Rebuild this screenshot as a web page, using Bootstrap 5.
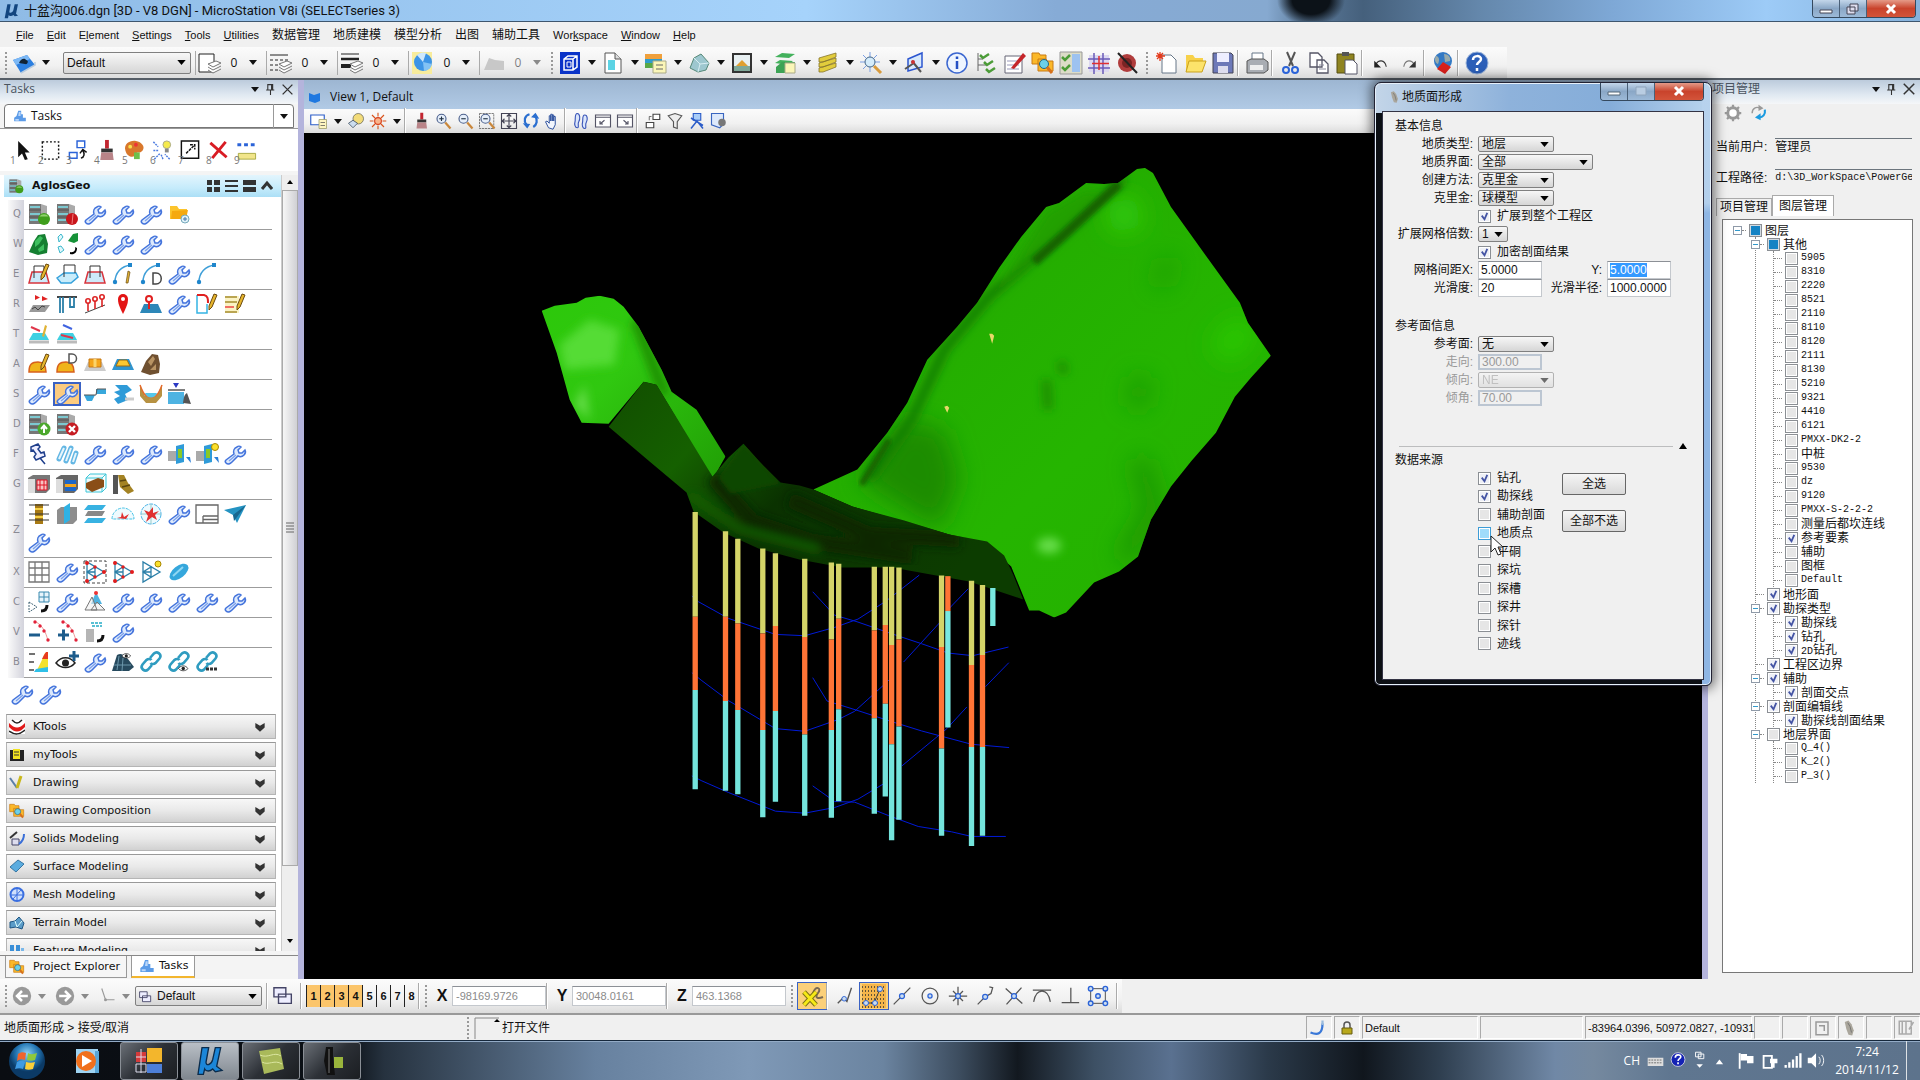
<!DOCTYPE html>
<html lang="zh-CN">
<head>
<meta charset="utf-8">
<meta name="viewport" content="width=device-width, initial-scale=1">
<title>十盆沟006.dgn - MicroStation V8i</title>
<link rel="stylesheet" href="https://cdn.jsdelivr.net/npm/bootstrap@5.3.0/dist/css/bootstrap.min.css">
<style>
:root{--ui:"Open Sans","Noto Sans CJK SC",sans-serif;--face:#f0f0f0}
body{font:12px/16px var(--ui);color:#111;background:var(--face);height:100vh;overflow:hidden}
svg{flex:none;display:block}
button{font:inherit;color:inherit;border:0;background:none;padding:0}
a{color:inherit;text-decoration:none}
::selection{background:#3399ff;color:#fff}
.zh{font-family:"Liberation Sans","Noto Sans CJK SC",sans-serif;font-size:12px}
.ico{width:24px;height:24px}
.ico-s{width:18px;height:18px}
/* window frame */
.titlebar{height:22px;font-family:Roboto,"Noto Sans CJK SC",sans-serif;font-size:13px;border-bottom:1px solid #3e566e;background:radial-gradient(ellipse 34px 26px at 1311px 0,#0c1218 55%,#0c121800),linear-gradient(90deg,#8fbbe6,#a6d3fb 42%,#86abd6 55%,#86a9d0 66%,#5d7b9b 68%,#45607c 71%,#6487ab 77%,#7ea8d6 84%,#9dcbf7 92%,#86b2dc)}
.winbtns{height:18px;border:1px solid #35495e;border-top:0;border-radius:0 0 4px 4px;overflow:hidden}
.winbtns button{width:27px;background:linear-gradient(#c3d6ea,#8aa7c6 50%,#9dbad8);border-right:1px solid #4a6078;color:#fff}
.winbtns button.shut{width:48px;border:0;background:linear-gradient(#e59a88,#c9432c 50%,#d3543a)}
.menus{height:25px;font-family:"Liberation Sans","Noto Sans CJK SC",sans-serif;font-size:11px;gap:13px;padding-left:16px}
.strip{background:linear-gradient(#fbfbfb,#f1f1f1 60%,#dcdcdc)}
.strip-main{height:31px}
.toolhost{border-bottom:2px solid #555d66;height:33px}
.grip{width:8px;height:24px;background:radial-gradient(circle,#999 1px,transparent 1px) 0 0/4px 4px repeat-y}
.vsep{width:6px;height:26px;border-left:1px solid #aaa;background:linear-gradient(90deg,#fff 1px,transparent 1px)}
.drop{width:19px;height:24px;display:flex;align-items:center;justify-content:center}
.drop::after{content:"";border:4px solid transparent;border-top:5px solid #111;border-bottom:0}
.drop.dim::after{border-top-color:#8a8a8a}
.cell28{width:28px;display:flex;justify-content:center}
.attr{width:71px;padding-left:2px;border-left:1px solid #aaa;display:flex;align-items:center}
.attr span{width:24px;text-align:center}
.attr .drop{width:14px}
.form-select.pick{font:12px/14px "Liberation Sans","Noto Sans CJK SC",sans-serif;color:#111;padding:0 16px 0 3px;border:1px solid #808080;border-radius:2px;background:url("data:image/svg+xml,%3Csvg xmlns='http://www.w3.org/2000/svg' viewBox='0 0 10 6'%3E%3Cpath d='M0 0h10L5 6z'/%3E%3C/svg%3E") right 4px center/9px 5px no-repeat,linear-gradient(#f7f7f7,#d6d6d6);height:16px;width:76px;min-height:0}
.form-select.pick:disabled{color:#999;background-color:#eee;opacity:.55}
.form-select.withicon{padding-left:21px}
.form-control.fld{font:12px/14px "Liberation Sans",sans-serif;height:18px;width:64px;min-height:0;padding:0 2px;border:1px solid #c4c8cd;border-top-color:#8c9096;border-radius:0;color:#111;background:#fff;box-shadow:none}
.form-control.fld:disabled{color:#999;background:#f0f0f0;border:2px solid #bcc6d2;height:16px}
.form-check-input.tick{width:13px;height:13px;margin:0;flex:none;border:1px solid #8b8f94;border-radius:0;background-color:#e6e6e6;box-shadow:inset 0 0 0 1px #fff}
.form-check-input.tick:checked{background-color:#eef0f6;border-color:#8b8f94;--bs-form-check-bg-image:url("data:image/svg+xml,%3Csvg xmlns='http://www.w3.org/2000/svg' viewBox='0 0 12 12'%3E%3Cpath d='M3 5l3 4L9 2' fill='none' stroke='%234454a4' stroke-width='2'/%3E%3C/svg%3E")}
.form-check-input.tick:indeterminate{background:#1583c4;border:2px solid #d3dbe2;outline:1px solid #8b8f94;outline-offset:-1px;box-shadow:none}
.form-check-input.hot{background-color:#9fdcfb;border-color:#3c9cd6}
/* docks */
.dock-l{width:304px;border-right:6px solid #b4b4dc;background:#f4f4f4}
.dock-r{width:218px;border-left:6px solid #b4b4dc}
.dockhead{height:24px;color:#4a5460;font-size:12px;background:linear-gradient(#bccbdc,#dfe8f1 60%,#f5f7f9);padding:0 4px 6px 0}
.combo{height:24px;margin:0 4px;border:1px solid #777;border-radius:4px 4px 0 0;background:#fff}
.combo .drop{border-left:1px solid #999;width:20px}
.quick{height:43px;border-top:1px solid #999;background:#fff;padding:10px 0 0 8px;font-size:10px;line-height:10px;color:#777}
.quick div{position:relative;width:28px;height:26px}
.quick svg{width:28px;height:23px}
.quick i{position:absolute;left:2px;bottom:0;font-style:normal}
.palhead{height:22px;font:bold 11px/22px "DejaVu Sans",sans-serif;background:linear-gradient(#e3f5fd,#c5ebfb 60%,#abdff6);margin:0 0 3px 4px;padding:0 8px 0 4px}
.prow{display:flex;min-height:30px}
.pkey{width:16px;margin-left:8px;background:linear-gradient(90deg,#fafafa,#d3d3dc);color:#8a8a94;font:10px/28px "DejaVu Sans",sans-serif;padding-left:5px}
.pset{width:248px;border-bottom:1px solid #9c9c9c;padding:2px 0 3px 1px;display:flex;flex-wrap:wrap;row-gap:4px}
.pset svg,.ploose svg{width:28px;height:24px}
.pset .on{background:#fccb7f;outline:2px solid #3a62c4;outline-offset:-2px}
.pbtn{height:25px;margin:0 2px 3px 6px;padding:0 8px 0 2px;width:270px;border:1px solid #b5b5b5;border-top-color:#999;background:linear-gradient(#f7f7f7,#e9e9e9 50%,#d1d1d1);font:11px/22px "DejaVu Sans",sans-serif}
.vscroll{width:17px;background:#eee;border-left:1px solid #ccc}
.vscroll .thumb{height:676px;background:linear-gradient(90deg,#f6f6f6,#d0d0d4);border:1px solid #aaa}
.docktabs{height:24px;border-top:1px solid #888;font:11px/24px "DejaVu Sans",sans-serif;padding-left:5px}
.docktabs a{height:22px;border:1px solid #999;border-top:0;background:#f6f6f6;padding:0 6px 0 3px}
.docktabs a.cur{background:#fff;border-bottom:2px solid #f3b62e}
/* view window */
.viewhead{height:29px;background:linear-gradient(#9db6d2,#b1cae5);font-size:12px;padding-top:4px}
.viewbar{height:24px;padding-left:4px}
.viewbar .ico-s{width:22px}
.viewbar .drop{width:15px}
/* project panel */
.pathrow{margin-top:14px;margin-bottom:9px}
.tabs2 a{border:1px solid #aaa;border-bottom:0;padding:0 3px;height:18px;line-height:17px}
.tabs2 a.cur{background:#fff;height:21px;padding:0 6px;line-height:20px}
.treebox{margin:3px 7px 6px 14px;border:1px solid #777;background:#fff;padding:3px 0 0 10px;font:12px/14px "Noto Sans CJK SC",sans-serif;overflow:hidden}
.treebox ul{list-style:none;margin:0;padding:0}
.treebox ul ul{margin-left:22px;border-left:1px dotted #888}
.treebox ul ul>li{margin-left:-5px}
.treebox .trow{display:flex;align-items:center;height:14px;white-space:nowrap}
.treebox label{display:flex;align-items:center;gap:3px}
.twig{width:16px;height:9px;display:flex;align-items:center}
.twig::after{content:"";flex:1;margin:0 3px 0 0;border-top:1px dotted #888}
.leaf{padding-left:5px}
.tog{width:9px;height:9px;border:1px solid #8f9aa8;background:linear-gradient(#39c,#39c) center/5px 1px no-repeat #fff}
.mono{font-family:"Liberation Mono",monospace;font-size:10px}
/* dialog */
.dlg{position:absolute;top:82px;right:208px;width:338px;padding:0 7px 5px;border:1px solid #223;border-radius:7px 7px 6px 6px;background:linear-gradient(180deg,#b8d3ee,#b3cfec 120px,#8fb6e4 130px) right/9px 100% no-repeat,linear-gradient(90deg,#c3d5e8,#8eb2db 40%,#85add9 70%,#b9d4ee) top/100% 30px no-repeat,#0c0f14;box-shadow:inset 0 0 0 1px #e6f0fa,0 0 12px 3px #0008}
.dlg .cap{height:28px;padding-left:6px}
.dlg .pane{background:var(--face);border:1px solid #334;height:569px;padding:5px 14px 0 12px}
.dlg .frow{display:flex;align-items:center;height:18px;line-height:16px}
.dlg .frow>.nm{width:78px;text-align:right;margin-right:5px;white-space:nowrap}
.dlg .off{color:#999}
.dlg .sect{margin-top:20px}
.dlg .rule{height:10px;margin-top:34px}
.srcs{height:184px;margin-left:83px;width:80px}
.srcs label,.frow label.ck{display:flex;align-items:center;gap:6px;height:18px}
.flat-btn{width:64px;height:22px;border:1px solid #666;border-radius:2px;background:linear-gradient(#f5f5f5,#d9d9d9);margin-bottom:15px}
/* bottom */
.strip-low{height:34px}
.nums button{width:14px;height:22px;border-left:1px solid #222;font:bold 11px/22px "Liberation Sans",sans-serif}
.nums .lit{background:#fbc56b}
.axis{font:bold 16px/20px "Liberation Sans",sans-serif;width:20px;text-align:center}
.form-control.coord{width:94px;height:20px;font-size:11px;color:#8a8a8a;padding:0 3px}
.snapon{outline:1px solid #3a62c4;background:#fbd07a}
.status{height:27px;border-top:2px solid #999}
.sbox{height:23px;border:1px solid #aaa;border-right-color:#fff;border-bottom-color:#fff;margin-right:2px;width:26px;padding:0 2px;display:flex;align-items:center;font-size:11px}
.taskbar{height:40px;border-top:1px solid #16283c;box-shadow:inset 0 1px #93abc6;color:#fff;background:linear-gradient(90deg,#0a0d12 0,#0b1016 18%,#26323f 20%,#67819f 31%,#7f99b7 39%,#6b84a0 46%,#3c4c5e 50%,#12181f 53%,#3d5064 57%,#5a7190 61%,#2b3a4a 66%,#10161d 71%,#2f3f50 75%,#7088a6 81%,#75899f 83%,#5f7690 87%,#5d738c)}
.tkb{width:58px;height:38px;margin-right:3px;border:1px solid #8a8f96;border-radius:3px;background:linear-gradient(135deg,#6a6f76,#2c3036 50%,#1b1e22)}
.tkb.cur{background:linear-gradient(#b9bfc6,#80878f)}
.tray svg{width:23px;height:19px}
.clock{width:78px;text-align:center;line-height:18px}
.showdesk{width:14px}
</style>
<script src="https://cdn.jsdelivr.net/npm/bootstrap@5.3.0/dist/js/bootstrap.bundle.min.js"></script>
</head>
<body class="d-flex flex-column">
<svg width="0" height="0" class="position-absolute" aria-hidden="true">
<defs>
<linearGradient id="gGreen" x1="0" y1="0" x2="1" y2="1"><stop offset="0" stop-color="#1f9a04"/><stop offset=".35" stop-color="#24ae00"/><stop offset=".6" stop-color="#25b500"/><stop offset="1" stop-color="#24b000"/></linearGradient>
<linearGradient id="gLobe" x1="0" y1="0" x2="1" y2="1"><stop offset="0" stop-color="#2cc80a"/><stop offset=".4" stop-color="#30c810"/><stop offset="1" stop-color="#1f9a04"/></linearGradient>
<linearGradient id="gDark" x1="0" y1="0" x2="1" y2=".5"><stop offset="0" stop-color="#114a00"/><stop offset=".3" stop-color="#156000"/><stop offset=".55" stop-color="#0a3200"/><stop offset="1" stop-color="#0c3c00"/></linearGradient>
<radialGradient id="gOrb" cx=".5" cy=".3"><stop offset="0" stop-color="#8fd3f5"/><stop offset=".6" stop-color="#2477b4"/><stop offset="1" stop-color="#0b3a66"/></radialGradient>
<filter id="bx" x="-50%" y="-50%" width="200%" height="200%"><feGaussianBlur stdDeviation="12"/></filter>
<filter id="bl"><feGaussianBlur stdDeviation="5"/></filter>
<filter id="bs"><feGaussianBlur stdDeviation="2"/></filter>
</defs>
<symbol id="wr" viewBox="0 0 24 24"><path d="M3 21c-1-1-1-2 0-3l8-6c-1-3 0-6 3-7 1-1 3-1 4 0l-3 3 1 3 3 0 3-3c1 2 0 4-1 5-2 2-4 2-6 1l-6 6c-2 2-4 3-6 1z" fill="#dce9fc" stroke="#4474dc" stroke-width="1.500"/><path d="M6 19l7-6" stroke="#7ba0ea" stroke-width="1.200"/></symbol>
<symbol id="db" viewBox="0 0 24 24"><path d="M2 2h12v20H2z" fill="#777"/><path d="M14 2l6 2v18h-6z" fill="#aaa"/><path d="M3 5h10M3 12h10M3 18h8" stroke="#7fe3ee" stroke-width="1.500"/><path d="M2 8h12M2 15h12" stroke="#555"/></symbol>
<symbol id="dbg" viewBox="0 0 24 24"><use href="#db"/><circle cx="17" cy="17" r="6" fill="#3f9e1c"/><path d="M12.500 14.500a5 4 0 0 1 9 0" fill="#8fd06c"/></symbol>
<symbol id="dbr" viewBox="0 0 24 24"><use href="#db"/><circle cx="17" cy="17" r="6" fill="#c9151b"/><path d="M18 12l-1 10" stroke="#ef7b7b"/></symbol>
<symbol id="dbu" viewBox="0 0 24 24"><use href="#db"/><circle cx="17" cy="17" r="6.500" fill="#4ba82c"/><path d="M17 21v-7m-3 3l3-3.500 3 3.500" stroke="#fff" stroke-width="2" fill="none"/></symbol>
<symbol id="dbx" viewBox="0 0 24 24"><use href="#db"/><circle cx="17" cy="17" r="6.500" fill="#c61c22"/><path d="M14 14l6 6m0-6l-6 6" stroke="#fff" stroke-width="2.400"/></symbol>
<symbol id="fold" viewBox="0 0 24 24"><path d="M3 4h7l2 3h8v10H3z" fill="#fcc42c"/><path d="M5 9l16-1-2 9H4z" fill="#f5a90f"/><circle cx="18" cy="17" r="4" fill="#dff1f8" stroke="#7ab"/><path d="M18 15v4m-2-2h4" stroke="#47a"/></symbol>
<symbol id="rockg" viewBox="0 0 24 24"><path d="M2 20L7 9l4-6 7-1 3 10-1 9-9 2z" fill="#157f31"/><path d="M8 9l5-5 3 2-4 6-4 3zM11 17l6-5v6l-5 2z" fill="#3ec05f"/></symbol>
<symbol id="rocks" viewBox="0 0 24 24"><path d="M3 5l3-3 2 3-4 5zM3 15l3-1 3 4-4 3z" fill="#dff7fb" stroke="#3cb8cc"/><path d="M13 9l5-7 5-1v8l-4 2z" fill="#169238"/><path d="M15 20c4 1 6-2 5-5l2 1c0 5-3 7-7 6z"/></symbol>
<symbol id="rockb" viewBox="0 0 24 24"><path d="M2 20L7 9l6-7 6 1 2 9-1 9-9 2z" fill="#6f5030"/><path d="M9 10l5-6 2 3-4 7zM11 18l6-6v6z" fill="#b99463"/></symbol>
<symbol id="pen" viewBox="0 0 24 24"><path d="M14 14L19 2l3 1-5 12-3 3z" fill="#e6b52c" stroke="#6b4a10"/></symbol>
<symbol id="trp" viewBox="0 0 24 24"><path d="M5 10h14l3 11H2z" fill="#cdeafa" stroke="#d8343c" stroke-width="1.500"/><path d="M7 16V4h10v11" stroke="#333" fill="none"/></symbol>
<symbol id="trpp" viewBox="0 0 24 24"><use href="#trp"/><use href="#pen"/></symbol>
<symbol id="trb" viewBox="0 0 24 24"><path d="M2 16l7-5h12l2 4-7 6H6z" fill="#c9ecfa" stroke="#35a1dc" stroke-width="1.500"/><path d="M9 15V3h11v8" stroke="#333" fill="none"/></symbol>
<symbol id="cv" viewBox="0 0 24 24"><path d="M4 20C4 11 10 4 20 3" stroke="#3f9fd8" stroke-width="1.500" fill="none"/><circle cx="4" cy="20" r="2.200" fill="#1f86cc"/><path d="M17 1h4v4h-4z" fill="#1f86cc"/></symbol>
<symbol id="cvp" viewBox="0 0 24 24"><use href="#cv"/><path d="M15 21l2-12 2 1-2 11z" fill="#e0b234" stroke="#6b4a10" stroke-width=".7"/></symbol>
<symbol id="dee" viewBox="0 0 24 24"><path d="M14 11h3c7 0 7 11 0 11h-3z" fill="none" stroke="#444" stroke-width="1.500"/></symbol>
<symbol id="cvd" viewBox="0 0 24 24"><use href="#cv"/><use href="#dee"/></symbol>
<symbol id="flag" viewBox="0 0 24 24"><path d="M2 20l4-7h17l-5 7z" fill="#999"/><path d="M5 17l3-2 3 3 4-4 3 1" stroke="#444" fill="none"/><path d="M8 12V3l5 2.500L8 8M15 12V4l6 3-6 2" fill="#e02222"/></symbol>
<symbol id="pipes" viewBox="0 0 24 24"><path d="M2 5h20" stroke="#444" stroke-width="2"/><path d="M5 5v16m3-16v16M15 5v10h4V5" stroke="#2b7fa8" stroke-width="1.800" fill="none"/></symbol>
<symbol id="pin" viewBox="0 0 24 24"><path d="M12 22C8 14 7 11 7 7a5 5 0 0 1 10 0c0 4-1 7-5 15z" fill="#e31414"/><circle cx="12" cy="7" r="2" fill="#fff"/></symbol>
<symbol id="pins" viewBox="0 0 24 24"><path d="M2 21l20-8" stroke="#444"/><g fill="none" stroke="#d22" stroke-width="1.600"><circle cx="5" cy="9" r="2.200"/><path d="M5 11v8"/><circle cx="12" cy="7" r="2.200"/><path d="M12 9v8"/><circle cx="19" cy="5" r="2.200"/><path d="M19 7v8"/></g></symbol>
<symbol id="pinb" viewBox="0 0 24 24"><path d="M5 12h14l4 9H1z" fill="#2d87b8"/><circle cx="10" cy="7" r="3" fill="#fff" stroke="#e02020" stroke-width="2"/><path d="M10 10v7" stroke="#e02020" stroke-width="2"/></symbol>
<symbol id="docr" viewBox="0 0 24 24"><path d="M2 3v18h10V12" fill="none" stroke="#35b4e4" stroke-width="1.500"/><path d="M2 3h7c4 1 4 4 4 8" fill="none" stroke="#e02020" stroke-width="2"/><use href="#pen"/></symbol>
<symbol id="docl" viewBox="0 0 24 24"><path d="M2 4h14v17H2z" fill="#fbf3c4"/><path d="M2 5h12M2 10h12M2 20h12" stroke="#a58c2c" stroke-width="1.500"/><path d="M2 15h9" stroke="#e44" stroke-width="1.500"/><use href="#pen"/></symbol>
<symbol id="tea" viewBox="0 0 24 24"><path d="M6 11h12l4 7H2z" fill="#3fd0e2"/><path d="M2 20h20" stroke="#bbb" stroke-width="3"/><path d="M4 5l9 4" stroke="#e0364a" stroke-width="2"/><path d="M15 14l3-11 2 1-3 11z" fill="#e0b234"/></symbol>
<symbol id="teb" viewBox="0 0 24 24"><path d="M6 11h12l4 7H2z" fill="#3fd0e2"/><path d="M2 20h20" stroke="#bbb" stroke-width="3"/><path d="M8 3l9 4" stroke="#3f63e0" stroke-width="2"/><path d="M6 13l12 3" stroke="#e0364a" stroke-width="2"/></symbol>
<symbol id="mnd" viewBox="0 0 24 24"><path d="M2 20c0-8 3-10 9-10 5 0 8 3 8 10z" fill="#f0b41a" stroke="#d7601c" stroke-width="1.500"/></symbol>
<symbol id="mndp" viewBox="0 0 24 24"><use href="#mnd"/><use href="#pen"/></symbol>
<symbol id="mndd" viewBox="0 0 24 24"><use href="#mnd"/><path d="M14 2h3c6 0 6 9 0 9h-3z" fill="#fff" stroke="#555" stroke-width="1.500"/></symbol>
<symbol id="bxo" viewBox="0 0 24 24"><path d="M5 10h14l4 9H1z" fill="#ccc"/><path d="M6 7h12v8H6z" fill="#f5a51b" stroke="#c57612"/><path d="M12 7v8" stroke="#fbd46b" stroke-width="3"/></symbol>
<symbol id="bxb" viewBox="0 0 24 24"><path d="M6 7h12l5 11H1z" fill="#2f94cf"/><path d="M8 8h8l3 6H5z" fill="#fcc731" stroke="#9c6b10"/></symbol>
<symbol id="chan" viewBox="0 0 24 24"><path d="M1 13h11l-3 6H4zM13 7h10v5H13z" fill="#38a8dc"/><path d="M1 13h12l1-6h9" stroke="#555" fill="none"/></symbol>
<symbol id="riv" viewBox="0 0 24 24"><path d="M4 3h12l5 5-7 4 3 6-10 4-4-5 6-3-6-4 6-2z" fill="#2f9bd8"/><path d="M14 17h9" stroke="#ccc" stroke-width="3"/></symbol>
<symbol id="vly" viewBox="0 0 24 24"><path d="M1 3l5 11 12-1 5-10v11l-6 7H7l-6-7z" fill="#b79242"/><path d="M1 3c3 8 5 12 11 12s8-4 11-12" stroke="#e46b2c" stroke-width="1.500" fill="none"/><path d="M6 11h12c-2 6-10 6-12 0z" fill="#55c7ea"/></symbol>
<symbol id="wat" viewBox="0 0 24 24"><path d="M1 10h16v12H1z" fill="#4eb3e2"/><path d="M1 8h17" stroke="#555" stroke-width="1.500"/><path d="M6 1h6l-3 5z" fill="#2b39c4"/><path d="M16 21c1-6 1-8 4-10l4 11z" fill="#555"/></symbol>
<symbol id="push" viewBox="0 0 24 24"><path d="M4 5l7-3 2 3-2 2 3 4 3-1 1 4-9 4-2-3 2-3-3-4-2 1zM13 16l5 6" fill="#eef" stroke="#1f3f8c" stroke-width="1.500"/></symbol>
<symbol id="blob" viewBox="0 0 24 24"><path d="M4 17L9 6M11 19l5-13M18 20l3-9" stroke="#64b7e4" stroke-width="5" stroke-linecap="round"/><path d="M4 17L9 6M11 19l5-13M18 20l3-9" stroke="#e6f5fc" stroke-width="2"/></symbol>
<symbol id="slab" viewBox="0 0 24 24"><path d="M1 9h9v10H1z" fill="#aaa"/><path d="M9 4l8-2v18l-8 2z" fill="#2f9bd8"/><path d="M11 7h4v9h-4z" fill="#8ac926"/><path d="M19 15l5 6-1-6z" fill="#2b7fd8"/></symbol>
<symbol id="slabl" viewBox="0 0 24 24"><use href="#slab"/><circle cx="20" cy="5" r="3.500" fill="#fbe02c" stroke="#a80"/></symbol>
<symbol id="cbr" viewBox="0 0 24 24"><path d="M1 6l5-3h17v14l-4 4H1z" fill="#777"/><path d="M1 7h7v14H1z" fill="#ddd"/><path d="M10 8h10v10H10z" fill="#f7c3c3"/><path d="M10 8h10v10H10zM13 8v10M17 8v10M10 13h10" stroke="#d12" fill="none"/></symbol>
<symbol id="cbs" viewBox="0 0 24 24"><path d="M1 6l5-3h17v14l-4 4H1z" fill="#666"/><path d="M1 7h7v14H1z" fill="#ddd"/><path d="M10 8h11v4H10z" fill="#1d67c8"/><path d="M10 12h11v3H10z" fill="#f5a51b"/><path d="M10 15h11v4H10z" fill="#1d67c8"/></symbol>
<symbol id="cbw" viewBox="0 0 24 24"><path d="M3 6h16v14H3zM3 6l4-4h16L19 6m4-4v14l-4 4" fill="#effbfc" stroke="#3cc6d8"/><path d="M3 11l12-5 6 2v7l-12 5-6-4z" fill="#8a4e17"/></symbol>
<symbol id="sbr" viewBox="0 0 24 24"><path d="M2 3h5v19H2z" fill="#555"/><path d="M7 3h6l4 8 6 8-6 3-8-7z" fill="#a48324"/><path d="M9 9l6-1M11 15l8-2" stroke="#5c4710" stroke-width="1.500"/></symbol>
<symbol id="colm" viewBox="0 0 24 24"><path d="M8 2h8v20H8z" fill="#a87a14"/><path d="M8 7h8M8 15h8" stroke="#f5cf44" stroke-width="2"/><path d="M2 3h20M2 12h20M2 18h20" stroke="#333"/></symbol>
<symbol id="cutb" viewBox="0 0 24 24"><path d="M2 8l4-3h16v13l-4 4H2z" fill="#8d8d8d"/><path d="M9 5l6-4v17l-6 4z" fill="#2fb2e4"/></symbol>
<symbol id="lays" viewBox="0 0 24 24"><path d="M5 3h18l-4 5H1zM5 16h18l-4 5H1z" fill="#38b2e2"/><path d="M5 9h17l-3 5H2z" fill="#888"/></symbol>
<symbol id="arcr" viewBox="0 0 24 24"><path d="M1 17a11 11 0 0 1 22 0z" fill="#eefafe" stroke="#48c2e6" stroke-dasharray="3 1"/><path d="M6 16l4-1 1-5 2 5 5-3-3 5z" fill="#e03030"/></symbol>
<symbol id="starr" viewBox="0 0 24 24"><circle cx="12" cy="12" r="10" fill="#eefafe" stroke="#48b2e6" stroke-dasharray="4 1"/><path d="M12 2v20M2 12h20" stroke="#9cc"/><path d="M5 8l5 2 4-5v6l6-2-4 4 2 5-5-3-6 5 2-6z" fill="#e03030"/></symbol>
<symbol id="tabl" viewBox="0 0 24 24"><path d="M1 3h22v18H1zM8 14h15M8 14v7M8 17.500h15" fill="none" stroke="#666" stroke-width="1.300"/></symbol>
<symbol id="plane" viewBox="0 0 24 24"><path d="M1 8L23 3l-9 18-4-8z" fill="#2493c2"/><path d="M23 3L10 13l1 6z" fill="#17678f"/></symbol>
<symbol id="grid" viewBox="0 0 24 24"><path d="M2 2h20v20H2zM8 2v20M15 2v20M2 8h20M2 15h20" fill="none" stroke="#777" stroke-width="1.300"/></symbol>
<symbol id="trn" viewBox="0 0 24 24"><path d="M4 2v20L21 12zM4 12h8M12 7v10L4 12z" fill="none" stroke="#2b7fa8" stroke-width="1.300"/></symbol>
<symbol id="trd" viewBox="0 0 24 24"><use href="#trn"/><g fill="#e31c1c"><circle cx="4" cy="3" r="2"/><circle cx="4" cy="21" r="2"/><circle cx="21" cy="12" r="2"/><circle cx="12" cy="7" r="1.700"/><circle cx="12" cy="17" r="1.700"/></g></symbol>
<symbol id="trx" viewBox="0 0 24 24"><path d="M1 1h22v22H1z" fill="none" stroke="#444" stroke-dasharray="3 2"/><use href="#trd"/></symbol>
<symbol id="trl" viewBox="0 0 24 24"><use href="#trn"/><circle cx="19" cy="4" r="3" fill="#fbe02c" stroke="#a80"/></symbol>
<symbol id="ell" viewBox="0 0 24 24"><ellipse cx="12" cy="12" rx="11" ry="6" transform="rotate(-38 12 12)" fill="#35a7dc"/><path d="M6 16l10-9" stroke="#8fd7f3" stroke-width="2"/></symbol>
<symbol id="xfm" viewBox="0 0 24 24"><path d="M12 2h10v10H12zM17 2v10M12 7h10" fill="#e7f4fb" stroke="#3a8ab0"/><path d="M2 12v10l8-5z" fill="none" stroke="#467" stroke-dasharray="2 1"/><path d="M14 21c4 0 6-2 6-6" stroke="#111" stroke-width="3" fill="none"/></symbol>
<symbol id="mtn" viewBox="0 0 24 24"><path d="M8 14l5-12 6 12z" fill="#4eb2e0"/><path d="M2 20L9 7l5 13zM8 20l6-8 8 8z" fill="#eee9" stroke="#777"/><circle cx="13" cy="3" r="2" fill="#e33"/></symbol>
<symbol id="dotc" viewBox="0 0 24 24"><path d="M9 2C15 5 19 12 21 21" fill="none" stroke="#e99"/><g fill="#e2223a"><circle cx="8" cy="2" r="1.700"/><circle cx="13" cy="6" r="1.700"/><circle cx="17" cy="11" r="1.700"/><circle cx="21" cy="20" r="1.700"/></g></symbol>
<symbol id="mins" viewBox="0 0 24 24"><use href="#dotc"/><path d="M2 15h11" stroke="#1d5c8c" stroke-width="3"/></symbol>
<symbol id="plus" viewBox="0 0 24 24"><use href="#dotc"/><path d="M3 15h11M8.500 9.500v11" stroke="#1d5c8c" stroke-width="3"/></symbol>
<symbol id="drips" viewBox="0 0 24 24"><path d="M8 3h12M9 6h10" stroke="#5ac0d4" stroke-width="2" stroke-dasharray="3 1"/><path d="M3 9h8v13H3z" fill="#b5b5b5"/><path d="M14 21c4 0 6-2 6-6" stroke="#111" stroke-width="3" fill="none"/></symbol>
<symbol id="spec" viewBox="0 0 24 24"><path d="M8 22L21 14v8z" fill="#2fd36f"/><path d="M14 12l4-9h3v19h-4l-8 0z" fill="#f4e12c"/><path d="M17 5l2-3h2v7h-6z" fill="#e83a1f"/><path d="M9 19l12-2v5H7z" fill="#2fc0e8"/><path d="M2 4h6M2 12h5M2 20h5" stroke="#444" stroke-width="1.500"/></symbol>
<symbol id="eye" viewBox="0 0 24 24"><path d="M1 13c5-7 14-7 19 0-5 6-14 6-19 0z" fill="#fff" stroke="#222" stroke-width="1.500"/><circle cx="10.500" cy="13" r="3.500" fill="#222"/></symbol>
<symbol id="eyep" viewBox="0 0 24 24"><use href="#eye"/><path d="M14 6h10M19 1v10" stroke="#1d5c8c" stroke-width="3"/></symbol>
<symbol id="mshe" viewBox="0 0 24 24"><path d="M1 21L6 5c5-3 8 1 11 4l6 8-5 4z" fill="#274a5e"/><path d="M8 6L6 20M12 8l-1 13M3 15h17" stroke="#6c97ab"/><use href="#eye" x="9" y="0" width="14" height="11"/></symbol>
<symbol id="link" viewBox="0 0 24 24"><g fill="none" stroke="#2f9cc0" stroke-width="2.600"><path d="M11 8l4-4.500c3-3 8.500 1 5.500 5l-4 4.500c-1.500 1.500-4 1.300-5 0"/><path d="M13 15l-4 4.500c-3 3-8.500-1-5.500-5l4-4.500c1.500-1.500 4-1.300 5 0"/></g></symbol>
<symbol id="linke" viewBox="0 0 24 24"><use href="#link"/><use href="#eye" x="10" y="12" width="14" height="12"/></symbol>
<symbol id="linkx" viewBox="0 0 24 24"><use href="#link"/><path d="M11 19h12" stroke="#333" stroke-width="3" stroke-dasharray="3 1"/></symbol>
<!-- toolbar glyphs -->
<symbol id="book" viewBox="0 0 24 24"><path d="M1 9l14-5 8 10-14 8z" fill="#2c7fe0"/><path d="M1 9l14-5 3 4-14 6z" fill="#7cb8f5"/><path d="M7 12c2-5 6-5 7-3 3 0 2 5-1 4z" fill="#123"/><path d="M9 22l14-8v-3" fill="none" stroke="#bcd" stroke-width="1.500"/></symbol>
<symbol id="stk" viewBox="0 0 24 24"><path d="M10 13l8-3 5 2-8 4zM10 16l5 3 8-4M10 19l5 3 8-4" fill="#fff" stroke="#777"/></symbol>
<symbol id="atA" viewBox="0 0 24 24"><path d="M1 3h15v18H1z" fill="#fff" stroke="#222"/><use href="#stk"/></symbol>
<symbol id="atB" viewBox="0 0 24 24"><path d="M1 4h18" stroke="#222"/><path d="M1 9h18M1 14h9M1 19h9" stroke="#222" stroke-dasharray="3 2"/><use href="#stk"/></symbol>
<symbol id="atC" viewBox="0 0 24 24"><path d="M1 3h18" stroke="#222"/><path d="M1 8h18" stroke="#222" stroke-width="2.500"/><path d="M1 15h10" stroke="#222" stroke-width="4"/><use href="#stk"/></symbol>
<symbol id="atD" viewBox="0 0 24 24"><path d="M1 1h20v22H1z" fill="#f8ec9c"/><circle cx="12" cy="11" r="9" fill="#3c94e6"/><path d="M12 11L6 4a9 9 0 0 1 9-2z" fill="#cfe8fc"/><path d="M12 11l9 2a9 9 0 0 1-8 7z" fill="#82c2f5"/></symbol>
<symbol id="atE" viewBox="0 0 24 24"><path d="M2 19l5-12 6 2 9 1v9z" fill="#c8c8c8"/></symbol>
<symbol id="cube" viewBox="0 0 24 24"><path d="M2 1h20v22H2z" fill="#0a33c8"/><path d="M6 8l4-3h9v11l-4 3H6zM6 8h9v11M15 8l4-3" fill="none" stroke="#fff" stroke-width="1.500"/><path d="M9 11h4v5H9z" fill="none" stroke="#fff"/></symbol>
<symbol id="page" viewBox="0 0 24 24"><path d="M4 2h10l6 6v14H4z" fill="#fff" stroke="#555"/><path d="M7 9h7v10H7z" fill="#5bd3e4"/><path d="M14 2v6h6" fill="#ddd" stroke="#555"/></symbol>
<symbol id="pics" viewBox="0 0 24 24"><path d="M1 3h17v14H1z" fill="#2f9ccc"/><path d="M1 3h17v5H1z" fill="#f0a03c"/><path d="M1 12h9v5H1z" fill="#59a846"/><path d="M9 10h13v12H9z" fill="#fbf6b8" stroke="#aa8"/><path d="M12 14h7M12 18h7" stroke="#666"/></symbol>
<symbol id="gem" viewBox="0 0 24 24"><path d="M3 17l4-10 7-4 8 9-3 7-8 2z" fill="#9dc7cf" stroke="#587"/><path d="M7 7l6 6 9-1M13 13l-2 8" stroke="#d7edf2" fill="none"/></symbol>
<symbol id="ras" viewBox="0 0 24 24"><path d="M2 2h20v20H2z" fill="#333"/><path d="M4 4h16v14H4z" fill="#e8f0f2"/><path d="M6 15l6-6 6 6z" fill="#e0a030"/><path d="M4 15h16v5H4z" fill="#7fa898"/></symbol>
<symbol id="stg" viewBox="0 0 24 24"><path d="M2 6l7-4 13 1-6 4zM2 12l5-3 13 1-5 4z" fill="#43b15c"/><path d="M3 16l6-5h13v9l-6 2H3z" fill="#3da355"/><path d="M12 12h10v10H12z" fill="#fbf6b8" stroke="#aa8"/></symbol>
<symbol id="sty" viewBox="0 0 24 24"><path d="M3 7l17-5v4L7 11H3zM3 12l17-5v4L7 16H3zM3 17l17-5v4L7 21H3z" fill="#e2cc3c" stroke="#86752c" stroke-width=".8"/></symbol>
<symbol id="spk" viewBox="0 0 24 24"><path d="M11 1v20M1 11h20M4 4l14 14M18 4L4 18" stroke="#7a9fe4"/><circle cx="11" cy="11" r="5" fill="#d5ecfb" stroke="#468"/><path d="M15 15l7 7" stroke="#d89a3c" stroke-width="3"/></symbol>
<symbol id="acs" viewBox="0 0 24 24"><path d="M6 8l14-6v14L6 20z" fill="#d8e9fb" stroke="#2b55d0" stroke-width="1.500"/><path d="M10 10l9 11M3 18l9-6" stroke="#555" stroke-width="2"/><circle cx="11" cy="11" r="2" fill="#c33"/></symbol>
<symbol id="info" viewBox="0 0 24 24"><circle cx="12" cy="12" r="10" fill="#eef5ff" stroke="#3a66d0" stroke-width="1.500"/><path d="M12 10v8M12 5.500v2.500" stroke="#2450c4" stroke-width="2.500"/></symbol>
<symbol id="lst" viewBox="0 0 24 24"><path d="M3 2v18M3 8h5M3 14h8" stroke="#666"/><path d="M5 4l3 3 6-4M9 11l3 3 6-4M11 18l3 3 6-4" stroke="#4c9c38" stroke-width="2.500" fill="none"/></symbol>
<symbol id="note" viewBox="0 0 24 24"><path d="M2 5h17v17H2z" fill="#fff" stroke="#667"/><path d="M4 10h12M4 14h12M4 18h12" stroke="#99b"/><path d="M8 17L20 2l3 3L11 18z" fill="#c5252a"/></symbol>
<symbol id="fsr" viewBox="0 0 24 24"><path d="M1 2h7l1 2h6v9H1zM7 8h8l1 2h6v10H7z" fill="#fbb829" stroke="#c87a14"/><circle cx="13" cy="13" r="4.500" fill="#6cd0e8" stroke="#268"/><path d="M16 16l5 6" stroke="#d6701c" stroke-width="3"/></symbol>
<symbol id="tgl" viewBox="0 0 24 24"><path d="M1 1h22v22H1z" fill="#dcdcc8" stroke="#999"/><path d="M13 3h8v18h-8z" fill="#9dc2f0"/><path d="M3 6l3 3 5-5M3 16l3 3 5-5" stroke="#4c9c38" stroke-width="2.500" fill="none"/></symbol>
<symbol id="kyi" viewBox="0 0 24 24"><path d="M2 4h20v17H2z" fill="#dcd8f0"/><path d="M7 2v21M16 2v21M1 8h22M1 17h22" stroke="#6a5bb8" stroke-width="1.500"/><path d="M12 5v14M5 12.500h17" stroke="#e03030" stroke-width="1.500"/></symbol>
<symbol id="nogo" viewBox="0 0 24 24"><circle cx="12" cy="12" r="9" fill="#b03c3c"/><circle cx="12" cy="12" r="5" fill="#7b2424"/><path d="M3 2l19 20" stroke="#222" stroke-width="2"/></symbol>
<symbol id="newf" viewBox="0 0 24 24"><path d="M7 4h9l5 5v13H7z" fill="#fff" stroke="#678"/><path d="M5 1v9M1 5h9M2 2l6 6M8 2L2 8" stroke="#e43a1c" stroke-width="1.300"/></symbol>
<symbol id="opn" viewBox="0 0 24 24"><path d="M3 4h7l2 3h8v13H3z" fill="#f7d14a"/><path d="M6 10h17l-4 11H3z" fill="#fce36b" stroke="#c9a11c"/></symbol>
<symbol id="sav" viewBox="0 0 24 24"><path d="M2 2h18l2 2v18H2z" fill="#6d79b8" stroke="#445"/><path d="M6 2h12v9H6z" fill="#eef"/><path d="M7 15h10v7H7z" fill="#dde"/></symbol>
<symbol id="prt" viewBox="0 0 24 24"><path d="M7 2h11v9H7z" fill="#fff" stroke="#678"/><path d="M2 10l4-2h13l4 3v8l-4 3H2z" fill="#a9adb3" stroke="#555"/><path d="M5 14h13v5H5z" fill="#eee"/></symbol>
<symbol id="cut" viewBox="0 0 24 24"><path d="M8 1l6 14M16 1l-6 14" stroke="#555" stroke-width="2"/><circle cx="7" cy="19" r="3" fill="none" stroke="#2b63d8" stroke-width="2"/><circle cx="16" cy="19" r="3" fill="none" stroke="#2b63d8" stroke-width="2"/></symbol>
<symbol id="cpy" viewBox="0 0 24 24"><path d="M3 2h8l4 4v10H3zM10 9h7l4 4v9H10z" fill="#fff" stroke="#556" stroke-width="1.300"/><path d="M12 14h5M12 18h7" stroke="#889"/></symbol>
<symbol id="pst" viewBox="0 0 24 24"><path d="M2 3h17v19H2z" fill="#8f8420" stroke="#554c10"/><path d="M7 1h7v4H7z" fill="#555"/><path d="M10 9h8l4 4v10H10z" fill="#fff" stroke="#556"/></symbol>
<symbol id="und" viewBox="0 0 24 24"><path d="M5 14c3-6 12-8 14 3" fill="none" stroke="#333" stroke-width="1.500"/><path d="M3 9v9h9z" fill="#222"/></symbol>
<symbol id="red" viewBox="0 0 24 24"><path d="M19 14c-3-6-12-8-14 3" fill="none" stroke="#777" stroke-width="1.500"/><path d="M21 9v9h-9z" fill="#333"/></symbol>
<symbol id="glb" viewBox="0 0 24 24"><circle cx="12" cy="10" r="9" fill="#3379c4"/><path d="M5 5c3 0 4 4 2 8-3-1-4-5-2-8zM13 3c5 0 7 4 6 7l-5 1z" fill="#9aa"/><path d="M12 11l8 5-6 7-8-5z" fill="#d8201c"/></symbol>
<symbol id="hlp" viewBox="0 0 24 24"><circle cx="12" cy="12" r="11" fill="#2c5fb8" stroke="#9bb4da"/><path d="M8 9c0-5 8-5 8-1 0 3-4 3-4 6M12 17v3" fill="none" stroke="#fff" stroke-width="2.500"/></symbol>
<symbol id="arr" viewBox="0 0 24 24"><path d="M8 2v17l4-4 3 7 3-1-3-7h5z" fill="#111"/></symbol>
<symbol id="fence" viewBox="0 0 24 24"><path d="M4 3h17v18H4z" fill="none" stroke="#111" stroke-width="1.500" stroke-dasharray="2 2"/></symbol>
<symbol id="manip" viewBox="0 0 24 24"><path d="M11 2h8v7h-8zM3 14h8v6H3z" fill="#fff" stroke="#2b63d8" stroke-width="1.500"/><path d="M15 20c4-1 4-5 2-8m-3 3l3-4 4 3" fill="none" stroke="#111" stroke-width="1.500"/></symbol>
<symbol id="brush" viewBox="0 0 24 24"><path d="M11 1h4v9h-4z" fill="#c22630"/><path d="M7 10h12v4H7z" fill="#333"/><path d="M7 14h12l1 8H6z" fill="#b98488"/></symbol>
<symbol id="pal" viewBox="0 0 24 24"><path d="M3 12C1 5 8 1 14 2s10 6 7 10-6 0-7 4-9 4-11-4z" fill="#d9782c"/><circle cx="8" cy="8" r="2" fill="#f9e04c"/><circle cx="14" cy="6" r="2" fill="#e33"/><path d="M12 14h6v7h-6z" fill="#6dc04a"/></symbol>
<symbol id="bulb" viewBox="0 0 24 24"><circle cx="17" cy="6" r="4" fill="#f5ea4c" stroke="#aa8"/><path d="M15 10h4v4h-4z" fill="#888"/><path d="M3 3l5 5M3 12h6M4 21l6-6M13 21l-2-5M20 21l-5-5" stroke="#4c7be0" stroke-width="1.500" stroke-dasharray="2 1"/></symbol>
<symbol id="mod" viewBox="0 0 24 24"><path d="M3 2h18v18H3z" fill="none" stroke="#111" stroke-width="1.500"/><path d="M8 15l9-9m-5 0h5v5" fill="none" stroke="#111" stroke-width="1.500" stroke-dasharray="3 1"/></symbol>
<symbol id="del" viewBox="0 0 24 24"><path d="M4 4l17 15M20 3L6 20" stroke="#d81c24" stroke-width="3"/></symbol>
<symbol id="meas" viewBox="0 0 24 24"><path d="M3 6h4m3 0h4m3 0h4" stroke="#2b63d8" stroke-width="3"/><path d="M4 15h18v6H4z" fill="#f1e58a" stroke="#aa4"/></symbol>
<symbol id="attrv" viewBox="0 0 24 24"><path d="M1 4h18v13H1z" fill="#fff" stroke="#2b5cc8" stroke-width="1.500"/><path d="M12 10h10v12H12z" fill="#fff6c0" stroke="#996"/><path d="M14 14h6M14 18h6" stroke="#555"/></symbol>
<symbol id="disp" viewBox="0 0 24 24"><circle cx="15" cy="9" r="7" fill="#f3dc7a" stroke="#665"/><path d="M2 15l6-4 6 4-6 6z" fill="#cde" stroke="#345"/></symbol>
<symbol id="sun" viewBox="0 0 24 24"><circle cx="12" cy="12" r="4.500" fill="#f9b48c" stroke="#d8401c" stroke-width="1.500"/><path d="M12 1v5M12 18v5M1 12h5M18 12h5M4 4l4 4M20 4l-4 4M4 20l4-4M20 20l-4-4" stroke="#d8541c" stroke-width="1.500"/></symbol>
<symbol id="mag" viewBox="0 0 24 24"><circle cx="10" cy="9" r="6" fill="#e5eefa" stroke="#4a5f8c" stroke-width="1.500"/><path d="M15 14l7 8" stroke="#c9873c" stroke-width="3"/><path d="M7 9h6" stroke="#234" stroke-width="1.500"/></symbol>
<symbol id="magp" viewBox="0 0 24 24"><use href="#mag"/><path d="M10 6v6" stroke="#234" stroke-width="1.500"/></symbol>
<symbol id="magw" viewBox="0 0 24 24"><path d="M2 2h19v20H2z" fill="none" stroke="#555" stroke-dasharray="3 1"/><use href="#mag"/></symbol>
<symbol id="fit" viewBox="0 0 24 24"><path d="M2 2h20v20H2zM12 3v18M3 12h18M9 6l3-3 3 3M9 18l3 3 3-3M6 9l-3 3 3 3M18 9l3 3-3 3" fill="none" stroke="#445" stroke-width="1.500"/></symbol>
<symbol id="rot" viewBox="0 0 24 24"><path d="M10 3C3 5 2 12 6 17M15 20c5-3 6-9 3-14" fill="none" stroke="#2b6fd0" stroke-width="3"/><path d="M1 15l10 1-4 6zM23 9L12 7l6-6z" fill="#2b6fd0"/></symbol>
<symbol id="hand" viewBox="0 0 24 24"><path d="M6 21l-4-8 2-1 3 3V5h2v7-9h2v9-8h2v8-6h2v11l-3 6z" fill="#f2f6fd" stroke="#2b4f9c" stroke-width="1.300"/></symbol>
<symbol id="feet" viewBox="0 0 24 24"><path d="M7 2c4 0 4 8 2 11s1 8-2 8-4-5-3-8S3 2 7 2zM17 4c4 0 4 7 2 10s1 8-2 8-4-5-3-8-1-10 3-10z" fill="#dbe6fb" stroke="#3a55b8" stroke-width="1.500"/></symbol>
<symbol id="vprev" viewBox="0 0 24 24"><path d="M2 4h20v16H2zM2 7h20M8 16l6-5M8 12v4h4" fill="#fff" stroke="#556" stroke-width="1.500"/></symbol>
<symbol id="vnext" viewBox="0 0 24 24"><path d="M2 4h20v16H2zM2 7h20M10 11l6 5M16 12v4h-4" fill="#fff" stroke="#556" stroke-width="1.500"/></symbol>
<symbol id="vcopy" viewBox="0 0 24 24"><path d="M12 3h9v7h-9zM3 14h10v7H3z" fill="#fff" stroke="#444" stroke-width="1.500"/><path d="M7 11V6h3" stroke="#444" fill="none"/></symbol>
<symbol id="clip" viewBox="0 0 24 24"><path d="M3 5l9-3 9 3-6 8v9l-5-2v-7z" fill="#eee" stroke="#555" stroke-width="1.500"/></symbol>
<symbol id="clipm" viewBox="0 0 24 24"><path d="M7 2h10v9H7z" fill="#a9cdf8" stroke="#2b5cc8" stroke-width="1.500"/><path d="M4 22l8-10 8 10M4 8l16 10" stroke="#2b5cc8" stroke-width="2" fill="none"/></symbol>
<symbol id="shld" viewBox="0 0 24 24"><path d="M2 2h16v14l-5 5-11-4z" fill="#dde9fb" stroke="#3a66c0" stroke-width="1.500"/><circle cx="16" cy="14" r="5" fill="#777"/></symbol>
<symbol id="gear" viewBox="0 0 24 24"><circle cx="12" cy="12" r="7" fill="#fff" stroke="#999" stroke-width="4"/><path d="M12 1v4M12 19v4M1 12h4M19 12h4M4 4l3 3M17 17l3 3M20 4l-3 3M4 20l3-3" stroke="#999" stroke-width="3"/></symbol>
<symbol id="rfr" viewBox="0 0 24 24"><path d="M3 13C3 6 9 3 14 6" fill="none" stroke="#999" stroke-width="2"/><path d="M12 1l7 5-7 4z" fill="#999"/><path d="M21 8c1 7-3 11-8 11" fill="none" stroke="#1b9be0" stroke-width="3"/><path d="M15 13v10l-8-4z" fill="#1b9be0"/></symbol>
<symbol id="rockd" viewBox="0 0 24 24"><path d="M5 4l5-2 4 5 3 8-2 7-5-1-3-8z" fill="#aaa69c"/><path d="M9 5l3 5 2 8" stroke="#666" fill="none"/></symbol>
<symbol id="chev" viewBox="0 0 24 24"><path d="M4 5l8 5 8-5v8l-8 7-8-7z" fill="#333"/></symbol>
<symbol id="pinh" viewBox="0 0 24 24"><path d="M7 3h9v10H7zM4 13h15M12 13v9M14 3v10" fill="none" stroke="#333" stroke-width="2"/></symbol>
<symbol id="cls" viewBox="0 0 24 24"><path d="M3 3l18 18M21 3L3 21" stroke="#333" stroke-width="2.500"/></symbol>
<symbol id="tsk" viewBox="0 0 24 24"><path d="M2 21h20v-6h-5V9h-3V3H9l-3 9-4 3z" fill="#5b9be8"/><path d="M10 5h3v7h-4zM4 17h6v3H4z" fill="#b9d6fa"/></symbol>
<symbol id="bkc" viewBox="0 0 24 24"><circle cx="12" cy="12" r="11" fill="#999"/><path d="M19 12H7m5-6l-6 6 6 6" stroke="#fff" stroke-width="3" fill="none"/></symbol>
<symbol id="fwc" viewBox="0 0 24 24"><circle cx="12" cy="12" r="11" fill="#999"/><path d="M5 12h12m-5-6l6 6-6 6" stroke="#fff" stroke-width="3" fill="none"/></symbol>
<symbol id="axs" viewBox="0 0 24 24"><path d="M5 2l5 15h12" stroke="#999" stroke-width="1.500" fill="none"/><circle cx="10" cy="17" r="2" fill="#999"/></symbol>
<symbol id="wins" viewBox="0 0 24 24"><path d="M1 3h13v10H1zM6 10h14v10H6z" fill="#eef" stroke="#446" stroke-width="1.500"/></symbol>
</svg>

<header class="titlebar d-flex align-items-center flex-shrink-0">
  <svg class="ms-1" width="16" height="16" viewBox="0 0 24 24"><path d="M5 2h5L8 13c0 3 5 2 6-2l2-9h5l-3 14 3 3-5 1-2-2c-2 2-6 2-7 0l-1 5H1z" fill="#12457f"/></svg>
  <span class="ms-1">十盆沟006.dgn [3D - V8 DGN] - MicroStation V8i (SELECTseries 3)</span>
  <div class="winbtns d-flex ms-auto me-1 align-self-start">
    <button aria-label="Minimize"><svg width="26" height="16" viewBox="0 0 26 16"><path d="M7 9h12v3H7z" fill="#fff" stroke="#445"/></svg></button>
    <button aria-label="Restore"><svg width="26" height="16" viewBox="0 0 26 16"><path d="M10 3h8v7h-8zM7 6h8v7H7z" fill="#dde" stroke="#445"/></svg></button>
    <button class="shut" aria-label="Close"><svg width="48" height="16" viewBox="0 0 48 16"><path d="M20 4l8 8m0-8l-8 8" stroke="#fff" stroke-width="3"/></svg></button>
  </div>
</header>

<nav class="menus d-flex align-items-center flex-shrink-0">
  <a href="#"><u>F</u>ile</a><a href="#"><u>E</u>dit</a><a href="#">E<u>l</u>ement</a><a href="#"><u>S</u>ettings</a><a href="#"><u>T</u>ools</a><a href="#"><u>U</u>tilities</a>
  <a href="#" class="zh">数据管理</a><a href="#" class="zh">地质建模</a><a href="#" class="zh">模型分析</a><a href="#" class="zh">出图</a><a href="#" class="zh">辅助工具</a>
  <a href="#">Wor<u>k</u>space</a><a href="#"><u>W</u>indow</a><a href="#"><u>H</u>elp</a>
</nav>

<div class="toolhost flex-shrink-0 d-flex">
  <div class="strip strip-main d-flex align-items-center pe-3">
    <span class="grip ms-1"></span>
    <button aria-label="Active level"><svg class="ico"><use href="#book"/></svg></button><button class="drop" aria-label="More"></button>
    <select class="form-select pick ms-2 me-1" style="width:128px;height:22px" aria-label="Active level name"><option>Default</option></select>
    <div class="attr"><svg class="ico"><use href="#atA"/></svg><span>0</span><button class="drop" aria-label="Color"></button></div>
    <div class="attr"><svg class="ico"><use href="#atB"/></svg><span>0</span><button class="drop" aria-label="Style"></button></div>
    <div class="attr"><svg class="ico"><use href="#atC"/></svg><span>0</span><button class="drop" aria-label="Weight"></button></div>
    <div class="attr"><svg class="ico"><use href="#atD"/></svg><span>0</span><button class="drop" aria-label="Transparency"></button></div>
    <div class="attr text-black-50"><svg class="ico"><use href="#atE"/></svg><span>0</span><button class="drop dim" aria-label="Priority"></button></div>
    <span class="grip"></span>
    <button aria-label="Models"><svg class="ico"><use href="#cube"/></svg></button><button class="drop" aria-label="More"></button>
    <button aria-label="References"><svg class="ico"><use href="#page"/></svg></button><button class="drop" aria-label="More"></button>
    <button aria-label="Raster manager"><svg class="ico"><use href="#pics"/></svg></button><button class="drop" aria-label="More"></button>
    <button aria-label="Point clouds"><svg class="ico"><use href="#gem"/></svg></button><button class="drop" aria-label="More"></button>
    <button aria-label="Saved views"><svg class="ico"><use href="#ras"/></svg></button><button class="drop" aria-label="More"></button>
    <button aria-label="Level manager"><svg class="ico"><use href="#stg"/></svg></button><button class="drop" aria-label="More"></button>
    <button aria-label="Level display"><svg class="ico"><use href="#sty"/></svg></button><button class="drop" aria-label="More"></button>
    <button aria-label="Cells"><svg class="ico"><use href="#spk"/></svg></button><button class="drop" aria-label="More"></button>
    <button aria-label="Coordinate system"><svg class="ico"><use href="#acs"/></svg></button><button class="drop" aria-label="More"></button>
    <button aria-label="Element information"><svg class="ico"><use href="#info"/></svg></button>
    <button class="cell28 ms-1" aria-label="Toggles"><svg class="ico"><use href="#lst"/></svg></button>
    <button class="cell28" aria-label="Notes"><svg class="ico"><use href="#note"/></svg></button>
    <button class="cell28" aria-label="Project explorer"><svg class="ico"><use href="#fsr"/></svg></button>
    <button class="cell28" aria-label="Lock toggles"><svg class="ico"><use href="#tgl"/></svg></button>
    <button class="cell28" aria-label="AccuDraw"><svg class="ico"><use href="#kyi"/></svg></button>
    <button class="cell28" aria-label="Popup off"><svg class="ico"><use href="#nogo"/></svg></button>
    <span class="grip ms-1"></span>
    <button class="cell28" aria-label="New"><svg class="ico"><use href="#newf"/></svg></button>
    <button class="cell28" aria-label="Open"><svg class="ico"><use href="#opn"/></svg></button>
    <button class="cell28" aria-label="Save"><svg class="ico"><use href="#sav"/></svg></button>
    <span class="vsep"></span>
    <button class="cell28" aria-label="Print"><svg class="ico"><use href="#prt"/></svg></button>
    <span class="vsep"></span>
    <button class="cell28" aria-label="Cut"><svg class="ico"><use href="#cut"/></svg></button>
    <button class="cell28" aria-label="Copy"><svg class="ico"><use href="#cpy"/></svg></button>
    <button class="cell28" aria-label="Paste"><svg class="ico"><use href="#pst"/></svg></button>
    <span class="vsep"></span>
    <button class="cell28" aria-label="Undo"><svg class="ico-s"><use href="#und"/></svg></button>
    <button class="cell28" aria-label="Redo"><svg class="ico-s"><use href="#red"/></svg></button>
    <span class="vsep"></span>
    <button class="cell28" aria-label="Globe"><svg class="ico"><use href="#glb"/></svg></button>
    <span class="vsep"></span>
    <button class="cell28" aria-label="Help"><svg class="ico"><use href="#hlp"/></svg></button>
  </div>
</div>

<main class="d-flex flex-grow-1 overflow-hidden">
  <aside class="dock-l d-flex flex-column flex-shrink-0">
    <div class="dockhead d-flex align-items-center"><span class="ms-1 me-auto">Tasks</span><button class="drop" aria-label="Menu"></button><svg width="13" height="13"><use href="#pinh"/></svg><svg class="ms-1" width="13" height="13"><use href="#cls"/></svg></div>
    <div class="combo d-flex align-items-center ps-2 flex-shrink-0"><svg width="14" height="14"><use href="#tsk"/></svg><span class="ms-1 me-auto">Tasks</span><button class="drop" aria-label="Choose task"></button></div>
    <div class="quick d-flex flex-shrink-0"><div><svg><use href="#arr"/></svg><i>1</i></div><div><svg><use href="#fence"/></svg><i>2</i></div><div><svg><use href="#manip"/></svg><i>3</i></div><div><svg><use href="#brush"/></svg><i>4</i></div><div><svg><use href="#pal"/></svg><i>5</i></div><div><svg><use href="#bulb"/></svg><i>6</i></div><div><svg><use href="#mod"/></svg><i>7</i></div><div><svg><use href="#del"/></svg><i>8</i></div><div><svg><use href="#meas"/></svg><i>9</i></div></div>
    <div class="d-flex flex-grow-1 overflow-hidden mt-1">
      <div class="flex-grow-1 overflow-hidden bg-white">
        <div class="palhead d-flex align-items-center"><svg width="16" height="16"><use href="#dbg"/></svg><span class="ms-2 me-auto">AglosGeo</span>
          <svg width="66" height="14" viewBox="0 0 66 14"><path d="M0 1h5v5H0zM7 1h6v5H7zM0 8h5v5H0zM7 8h6v5H7zM18 1h13v2H18zM18 6h13v2H18zM18 11h13v2H18zM36 1h13v5H36zM36 8h13v5H36z" fill="#333"/><path d="M55 10l5-6 5 6" stroke="#333" stroke-width="3" fill="none"/></svg></div>
        <div class="prow"><span class="pkey">Q</span><div class="pset"><svg><use href="#dbg"/></svg><svg><use href="#dbr"/></svg><svg><use href="#wr"/></svg><svg><use href="#wr"/></svg><svg><use href="#wr"/></svg><svg><use href="#fold"/></svg></div></div>
        <div class="prow"><span class="pkey">W</span><div class="pset"><svg><use href="#rockg"/></svg><svg><use href="#rocks"/></svg><svg><use href="#wr"/></svg><svg><use href="#wr"/></svg><svg><use href="#wr"/></svg></div></div>
        <div class="prow"><span class="pkey">E</span><div class="pset"><svg><use href="#trpp"/></svg><svg><use href="#trb"/></svg><svg><use href="#trp"/></svg><svg><use href="#cvp"/></svg><svg><use href="#cvd"/></svg><svg><use href="#wr"/></svg><svg><use href="#cv"/></svg></div></div>
        <div class="prow"><span class="pkey">R</span><div class="pset"><svg><use href="#flag"/></svg><svg><use href="#pipes"/></svg><svg><use href="#pins"/></svg><svg><use href="#pin"/></svg><svg><use href="#pinb"/></svg><svg><use href="#wr"/></svg><svg><use href="#docr"/></svg><svg><use href="#docl"/></svg></div></div>
        <div class="prow"><span class="pkey">T</span><div class="pset"><svg><use href="#tea"/></svg><svg><use href="#teb"/></svg></div></div>
        <div class="prow"><span class="pkey">A</span><div class="pset"><svg><use href="#mndp"/></svg><svg><use href="#mndd"/></svg><svg><use href="#bxo"/></svg><svg><use href="#bxb"/></svg><svg><use href="#rockb"/></svg></div></div>
        <div class="prow"><span class="pkey">S</span><div class="pset"><svg><use href="#wr"/></svg><svg class="on"><use href="#wr"/></svg><svg><use href="#chan"/></svg><svg><use href="#riv"/></svg><svg><use href="#vly"/></svg><svg><use href="#wat"/></svg></div></div>
        <div class="prow"><span class="pkey">D</span><div class="pset"><svg><use href="#dbu"/></svg><svg><use href="#dbx"/></svg></div></div>
        <div class="prow"><span class="pkey">F</span><div class="pset"><svg><use href="#push"/></svg><svg><use href="#blob"/></svg><svg><use href="#wr"/></svg><svg><use href="#wr"/></svg><svg><use href="#wr"/></svg><svg><use href="#slab"/></svg><svg><use href="#slabl"/></svg><svg><use href="#wr"/></svg></div></div>
        <div class="prow"><span class="pkey">G</span><div class="pset"><svg><use href="#cbr"/></svg><svg><use href="#cbs"/></svg><svg><use href="#cbw"/></svg><svg><use href="#sbr"/></svg></div></div>
        <div class="prow"><span class="pkey pt-3">Z</span><div class="pset"><svg><use href="#colm"/></svg><svg><use href="#cutb"/></svg><svg><use href="#lays"/></svg><svg><use href="#arcr"/></svg><svg><use href="#starr"/></svg><svg><use href="#wr"/></svg><svg><use href="#tabl"/></svg><svg><use href="#plane"/></svg><svg><use href="#wr"/></svg></div></div>
        <div class="prow"><span class="pkey">X</span><div class="pset"><svg><use href="#grid"/></svg><svg><use href="#wr"/></svg><svg><use href="#trx"/></svg><svg><use href="#trd"/></svg><svg><use href="#trl"/></svg><svg><use href="#ell"/></svg></div></div>
        <div class="prow"><span class="pkey">C</span><div class="pset"><svg><use href="#xfm"/></svg><svg><use href="#wr"/></svg><svg><use href="#mtn"/></svg><svg><use href="#wr"/></svg><svg><use href="#wr"/></svg><svg><use href="#wr"/></svg><svg><use href="#wr"/></svg><svg><use href="#wr"/></svg></div></div>
        <div class="prow"><span class="pkey">V</span><div class="pset"><svg><use href="#mins"/></svg><svg><use href="#plus"/></svg><svg><use href="#drips"/></svg><svg><use href="#wr"/></svg></div></div>
        <div class="prow"><span class="pkey">B</span><div class="pset"><svg><use href="#spec"/></svg><svg><use href="#eyep"/></svg><svg><use href="#wr"/></svg><svg><use href="#mshe"/></svg><svg><use href="#link"/></svg><svg><use href="#linke"/></svg><svg><use href="#linkx"/></svg></div></div>
        <div class="ploose d-flex ps-2 pt-1 pb-2"><svg><use href="#wr"/></svg><svg><use href="#wr"/></svg></div>
        <button class="pbtn d-flex align-items-center"><svg width="16" height="16" viewBox="0 0 16 16"><path d="M0 1h16v14H0z" fill="#fff"/><path d="M0 4c6 6 10 6 16 0v4c-6 6-10 6-16 0z" fill="#e01c1c"/><path d="M3 1c4 4 6 4 10 0M0 12c6 4 10 4 16-1" stroke="#222" fill="none" stroke-width="1.500"/></svg><span class="ms-2 me-auto">KTools</span><svg width="14" height="14"><use href="#chev"/></svg></button>
        <button class="pbtn d-flex align-items-center"><svg width="16" height="16" viewBox="0 0 16 16"><path d="M1 3h14v11H1z" fill="#222"/><path d="M4 2h7v10H4z" fill="#f1e320"/><path d="M5 5h5M5 8h5" stroke="#333"/></svg><span class="ms-2 me-auto">myTools</span><svg width="14" height="14"><use href="#chev"/></svg></button>
        <button class="pbtn d-flex align-items-center"><svg width="16" height="16" viewBox="0 0 16 16"><path d="M1 3l7 10" stroke="#5a7fa8" stroke-width="2"/><path d="M12 1L8 13" stroke="#c9b81c" stroke-width="3"/></svg><span class="ms-2 me-auto">Drawing</span><svg width="14" height="14"><use href="#chev"/></svg></button>
        <button class="pbtn d-flex align-items-center"><svg width="16" height="16"><use href="#fsr"/></svg><span class="ms-2 me-auto">Drawing Composition</span><svg width="14" height="14"><use href="#chev"/></svg></button>
        <button class="pbtn d-flex align-items-center"><svg width="16" height="16" viewBox="0 0 16 16"><path d="M1 7l7-6" stroke="#333" stroke-width="2"/><path d="M3 8h7v6H3z" fill="#dde" stroke="#446"/><path d="M15 3c0 6-2 8-5 10" stroke="#3a6fd8" stroke-width="2" fill="none"/></svg><span class="ms-2 me-auto">Solids Modeling</span><svg width="14" height="14"><use href="#chev"/></svg></button>
        <button class="pbtn d-flex align-items-center"><svg width="16" height="16" viewBox="0 0 16 16"><path d="M1 8l8-7 6 4-8 8z" fill="#5bacdf" stroke="#3777a4"/></svg><span class="ms-2 me-auto">Surface Modeling</span><svg width="14" height="14"><use href="#chev"/></svg></button>
        <button class="pbtn d-flex align-items-center"><svg width="16" height="16" viewBox="0 0 16 16"><circle cx="8" cy="7.500" r="6.500" fill="#cfe0fc" stroke="#3a6fe0" stroke-width="2"/><path d="M2 8h12M8 1v13M4 12l8-9" stroke="#3a6fe0"/></svg><span class="ms-2 me-auto">Mesh Modeling</span><svg width="14" height="14"><use href="#chev"/></svg></button>
        <button class="pbtn d-flex align-items-center"><svg width="16" height="16" viewBox="0 0 16 16"><path d="M1 7l5-1 4-4 5 6-2 6-6-2-6 1z" fill="#5b9cc8" stroke="#1f5784"/><path d="M6 6l2 6 5-6" stroke="#dff" fill="none"/></svg><span class="ms-2 me-auto">Terrain Model</span><svg width="14" height="14"><use href="#chev"/></svg></button>
        <button class="pbtn d-flex align-items-center"><svg width="16" height="16" viewBox="0 0 16 16"><path d="M1 2h4v12H1zM7 2h4v12H7z" fill="#3a8fd8"/><path d="M12 5h3v9h-3z" fill="#7ab8ea"/></svg><span class="ms-2 me-auto">Feature Modeling</span><svg width="14" height="14"><use href="#chev"/></svg></button>
      </div>
      <div class="vscroll d-flex flex-column">
        <svg width="16" height="15" viewBox="0 0 16 15"><path d="M5 9l3-4 3 4z"/></svg>
        <div class="thumb d-flex align-items-center justify-content-center"><svg width="8" height="12" viewBox="0 0 8 12"><path d="M0 1h8M0 4h8M0 7h8M0 10h8" stroke="#666"/></svg></div>
        <svg class="mt-auto" width="16" height="18" viewBox="0 0 16 18"><path d="M5 6l3 4 3-4z"/></svg>
      </div>
    </div>
    <div class="docktabs d-flex flex-shrink-0 mt-1"><a href="#" class="d-flex align-items-center"><svg class="me-2" width="16" height="16"><use href="#fsr"/></svg>Project Explorer</a><a href="#" class="cur d-flex align-items-center ms-1"><svg class="me-1 ms-1" width="16" height="16"><use href="#tsk"/></svg>Tasks</a></div>
  </aside>

  <section class="d-flex flex-column flex-grow-1 overflow-hidden">
    <div class="viewhead d-flex align-items-center ps-1 flex-shrink-0"><svg width="14" height="14" viewBox="0 0 14 14"><path d="M1 3l5 2 6-2v8l-5 2-6-2z" fill="#1f78e0"/></svg><span class="ms-2">View 1, Default</span></div>
    <div class="viewbar strip d-flex align-items-center flex-shrink-0">
      <svg class="ico-s"><use href="#attrv"/></svg><button class="drop" aria-label="Attributes"></button><svg class="ico-s"><use href="#disp"/></svg><svg class="ico-s"><use href="#sun"/></svg><button class="drop" aria-label="Brightness"></button><span class="vsep"></span>
      <svg class="ico-s"><use href="#brush"/></svg><svg class="ico-s"><use href="#magp"/></svg><svg class="ico-s"><use href="#mag"/></svg><svg class="ico-s"><use href="#magw"/></svg><svg class="ico-s"><use href="#fit"/></svg><svg class="ico-s"><use href="#rot"/></svg><svg class="ico-s"><use href="#hand"/></svg><span class="vsep"></span>
      <svg class="ico-s"><use href="#feet"/></svg><svg class="ico-s"><use href="#vprev"/></svg><svg class="ico-s"><use href="#vnext"/></svg><span class="vsep"></span>
      <svg class="ico-s"><use href="#vcopy"/></svg><svg class="ico-s"><use href="#clip"/></svg><svg class="ico-s"><use href="#clipm"/></svg><svg class="ico-s"><use href="#shld"/></svg>
    </div>
    <div class="flex-grow-1 overflow-hidden bg-black">
    <svg width="100%" height="100%" viewBox="304 133 1398 847" preserveAspectRatio="xMinYMin meet" role="img" aria-label="3D geological surface">
      <rect x="304" y="133" width="1398" height="847"/>
      <clipPath id="cR"><path d="M814 490L858 470 888 433 908 403 928 360 958 327 978 303 1000 268 1022 237 1047 207 1060 203 1087 183 1105 184 1119 183 1138 169 1146 168 1154 173 1172 207 1207 256 1241 303 1249 323 1272 356 1252 378 1236 397 1217 433 1192 462 1172 487 1152 520 1139 557 1120 572 1095 583 1067 613 1055 618 1040 611 1030 611 1012 567 988 545 950 535 853 507z"/></clipPath>
      <g clip-path="url(#cR)">
        <path d="M800 160h480v470H800z" fill="url(#gGreen)"/>
        <g filter="url(#bx)">
          <path d="M860 480l40-60 45 10 15 50-20 50z" fill="#1b8c00"/>
          <path d="M1140 460l15 50-30 50" stroke="#1d9000" stroke-width="16" fill="none"/>
          <path d="M1130 390l20 5M1160 270l12 5" stroke="#1f9a02" stroke-width="30" fill="none"/>
          <path d="M1120 200l10 30" stroke="#30cc0c" stroke-width="30"/>
          <path d="M1225 330l20 20" stroke="#2ac804" stroke-width="40"/>
        </g>
        <g filter="url(#bl)">
          <path d="M1125 178L1055 240 990 296 945 350 912 420 870 480" stroke="#187c00" stroke-width="9" fill="none"/>
          <path d="M1047 212L1085 190 1110 190 1060 235 1000 285z" fill="#21a002"/>
          <path d="M1047 380l2 30M1062 362l3 12" stroke="#1a8c02" stroke-width="9"/>
          <ellipse cx="1050" cy="546" rx="12" ry="8" fill="#66dd4a"/>
        </g>
        <path d="M1120 184L1065 235 1035 262" stroke="#156400" stroke-width="9" fill="none" filter="url(#bs)"/>
        <path d="M890 440l-28 45" stroke="#156400" stroke-width="6" fill="none" filter="url(#bs)"/>
      </g>
      <clipPath id="cL"><path d="M542 311L555 306 577 303 586 298 600 296 614 299 624 307 639 327 662 370 672 392 697 410 726 457 713 480 657 385 644 382 609 424 582 423 570 400 557 353z"/></clipPath>
      <g clip-path="url(#cL)"><path d="M540 290h200v200H540z" fill="url(#gLobe)"/><g filter="url(#bl)"><path d="M560 345l30-25 30 10-5 35-50 5z" fill="#54dc34"/><path d="M575 405l10-20 5 35z" fill="#66dd4a"/><path d="M636 320l29 75" stroke="#1a8a00" stroke-width="10"/></g></g>
      <clipPath id="cD"><path d="M644 382L657 385 713 477 729 458 744 444 760 462 781 483 800 486 814 490 853 507 905 521 950 535 988 542 1005 556 1014 575 1024 600 970 582 893 568 843 568 800 560 759 549 724 533 694 512 687 493 650 462 609 427z"/></clipPath>
      <g clip-path="url(#cD)"><path d="M600 370h430v240H600z" fill="url(#gDark)"/><g filter="url(#bl)"><path d="M713 477l40 45 60 20 100 15M790 500l80 35 90 5" stroke="#082600" stroke-width="16" fill="none"/><path d="M690 495l50 35 80 20" stroke="#196600" stroke-width="6" fill="none"/></g><path d="M744 444l37 40-50 10-12-16z" fill="#0e4600" filter="url(#bs)"/></g>
      <path d="M945 407l3-1 2 2-2 5zM990 334l3 0 2 2-2 8z" fill="#e8d86a"/>
      <g transform="translate(661 480) scale(.3333)" fill="none" stroke-width="16">
        <g stroke="#001ad8" stroke-width="3">
          <path d="M94 350l20 17 90 50 141 48 88 4 90-25 70-25 84-54 100-78M457 337l65 70 68 20 104 36 90 30 80 28 74 8 107-26M730 548l110-120M866 388l58-60"/>
          <path d="M94 580l30 24 80 60 141 84 88 8 100-35 50-25 94-85 10-10M457 595l43 70 90 28 104 34 90 28 150 40 113 10M725 860l135-112 60-65M976 622l70-72"/>
          <path d="M94 890l30 15 80 35 141 56 88 6 90-17 70-25 90-54M457 920l66 47 60 2 101 40 90 33 100 16 60 14h103"/>
        </g>
        <path stroke="#78e8e0" d="M863 395V745M998 326V440"/><path stroke="#ff7436" d="M863 290V395"/>
        <path stroke="#d4d468" d="M104 97V412M195 155V412M232 178V432M307 207V462M345 221V440M433 238V473M513 249V480M535 253V418M642 262V453M675 262V437M694 262V497M716 264V480M844 288V503M934 304V557M967 317V527"/>
        <path stroke="#ff7436" d="M104 412V632M195 412V665M232 432V692M307 462V752M345 440V695M433 473V766M513 480V752M535 418V690M642 453V717M675 437V673M694 497V795M716 480V742M844 503V808M934 557V803M967 527V803"/>
        <path stroke="#74e4dc" d="M104 632V930M195 665V935M232 692V945M307 752V1014M345 695V968M433 766V1010M513 752V1016M535 690V966M642 717V1004M675 673V952M694 795V1083M716 742V1022M844 808V1070M934 803V1101M967 803V1070"/>
      </g>
    </svg>
    </div>
  </section>

  <aside class="dock-r d-flex flex-column flex-shrink-0 zh">
    <div class="dockhead d-flex align-items-center"><span class="ms-1 me-auto">项目管理</span><button class="drop" aria-label="Menu"></button><svg width="13" height="13"><use href="#pinh"/></svg><svg class="ms-1" width="14" height="14"><use href="#cls"/></svg></div>
    <div class="d-flex ps-3"><svg class="me-1" width="18" height="18"><use href="#gear"/></svg><svg class="ms-1" width="17" height="17"><use href="#rfr"/></svg></div>
    <div class="d-flex ps-2 mt-3 align-items-center"><span class="flex-shrink-0 me-2">当前用户:</span><span class="border-top border-secondary flex-grow-1 me-2">管理员</span></div>
    <div class="pathrow d-flex ps-2 align-items-center"><span class="flex-shrink-0 me-2">工程路径:</span><span class="mono border-top border-secondary flex-grow-1 me-2 overflow-hidden">d:\3D_WorkSpace\PowerGe</span></div>
    <nav class="tabs2 d-flex align-items-end ps-2"><a href="#">项目管理</a><a href="#" class="cur">图层管理</a></nav>
    <div class="treebox flex-grow-1">
      <ul>
        <li><div class="trow"><span class="twig"><button class="tog" aria-label="-"></button></span><label><input type="checkbox" class="form-check-input tick part">图层</label></div>
        <ul>
          <li><div class="trow"><span class="twig"><button class="tog" aria-label="-"></button></span><label><input type="checkbox" class="form-check-input tick part">其他</label></div>
          <ul class="mono">
            <li class="trow"><span class="twig leaf"></span><label><input type="checkbox" class="form-check-input tick">5905</label></li>
            <li class="trow"><span class="twig leaf"></span><label><input type="checkbox" class="form-check-input tick">8310</label></li>
            <li class="trow"><span class="twig leaf"></span><label><input type="checkbox" class="form-check-input tick">2220</label></li>
            <li class="trow"><span class="twig leaf"></span><label><input type="checkbox" class="form-check-input tick">8521</label></li>
            <li class="trow"><span class="twig leaf"></span><label><input type="checkbox" class="form-check-input tick">2110</label></li>
            <li class="trow"><span class="twig leaf"></span><label><input type="checkbox" class="form-check-input tick">8110</label></li>
            <li class="trow"><span class="twig leaf"></span><label><input type="checkbox" class="form-check-input tick">8120</label></li>
            <li class="trow"><span class="twig leaf"></span><label><input type="checkbox" class="form-check-input tick">2111</label></li>
            <li class="trow"><span class="twig leaf"></span><label><input type="checkbox" class="form-check-input tick">8130</label></li>
            <li class="trow"><span class="twig leaf"></span><label><input type="checkbox" class="form-check-input tick">5210</label></li>
            <li class="trow"><span class="twig leaf"></span><label><input type="checkbox" class="form-check-input tick">9321</label></li>
            <li class="trow"><span class="twig leaf"></span><label><input type="checkbox" class="form-check-input tick">4410</label></li>
            <li class="trow"><span class="twig leaf"></span><label><input type="checkbox" class="form-check-input tick">6121</label></li>
            <li class="trow"><span class="twig leaf"></span><label><input type="checkbox" class="form-check-input tick">PMXX-DK2-2</label></li>
            <li class="trow"><span class="twig leaf"></span><label class="zh"><input type="checkbox" class="form-check-input tick">中桩</label></li>
            <li class="trow"><span class="twig leaf"></span><label><input type="checkbox" class="form-check-input tick">9530</label></li>
            <li class="trow"><span class="twig leaf"></span><label><input type="checkbox" class="form-check-input tick">dz</label></li>
            <li class="trow"><span class="twig leaf"></span><label><input type="checkbox" class="form-check-input tick">9120</label></li>
            <li class="trow"><span class="twig leaf"></span><label><input type="checkbox" class="form-check-input tick">PMXX-S-2-2-2</label></li>
            <li class="trow"><span class="twig leaf"></span><label class="zh"><input type="checkbox" class="form-check-input tick">测量后都坎连线</label></li>
            <li class="trow"><span class="twig leaf"></span><label class="zh"><input type="checkbox" class="form-check-input tick" checked>参考要素</label></li>
            <li class="trow"><span class="twig leaf"></span><label class="zh"><input type="checkbox" class="form-check-input tick">辅助</label></li>
            <li class="trow"><span class="twig leaf"></span><label class="zh"><input type="checkbox" class="form-check-input tick">图框</label></li>
            <li class="trow"><span class="twig leaf"></span><label><input type="checkbox" class="form-check-input tick">Default</label></li>
          </ul></li>
          <li class="trow"><span class="twig leaf"></span><label><input type="checkbox" class="form-check-input tick" checked>地形面</label></li>
          <li><div class="trow"><span class="twig"><button class="tog" aria-label="-"></button></span><label><input type="checkbox" class="form-check-input tick" checked>勘探类型</label></div>
          <ul>
            <li class="trow"><span class="twig leaf"></span><label><input type="checkbox" class="form-check-input tick" checked>勘探线</label></li>
            <li class="trow"><span class="twig leaf"></span><label><input type="checkbox" class="form-check-input tick" checked>钻孔</label></li>
            <li class="trow"><span class="twig leaf"></span><label><input type="checkbox" class="form-check-input tick" checked><span><span class="mono">2D</span>钻孔</span></label></li>
          </ul></li>
          <li class="trow"><span class="twig leaf"></span><label><input type="checkbox" class="form-check-input tick" checked>工程区边界</label></li>
          <li><div class="trow"><span class="twig"><button class="tog" aria-label="-"></button></span><label><input type="checkbox" class="form-check-input tick" checked>辅助</label></div>
          <ul><li class="trow"><span class="twig leaf"></span><label><input type="checkbox" class="form-check-input tick" checked>剖面交点</label></li></ul></li>
          <li><div class="trow"><span class="twig"><button class="tog" aria-label="-"></button></span><label><input type="checkbox" class="form-check-input tick" checked>剖面编辑线</label></div>
          <ul><li class="trow"><span class="twig leaf"></span><label><input type="checkbox" class="form-check-input tick" checked>勘探线剖面结果</label></li></ul></li>
          <li><div class="trow"><span class="twig"><button class="tog" aria-label="-"></button></span><label><input type="checkbox" class="form-check-input tick">地层界面</label></div>
          <ul class="mono">
            <li class="trow"><span class="twig leaf"></span><label><input type="checkbox" class="form-check-input tick">Q_4()</label></li>
            <li class="trow"><span class="twig leaf"></span><label><input type="checkbox" class="form-check-input tick">K_2()</label></li>
            <li class="trow"><span class="twig leaf"></span><label><input type="checkbox" class="form-check-input tick">P_3()</label></li>
          </ul></li>
        </ul></li>
      </ul>
    </div>
  </aside>
</main>

<div class="strip strip-low d-flex align-items-center flex-shrink-0">
  <span class="grip ms-1"></span>
  <button aria-label="Back"><svg width="20" height="20"><use href="#bkc"/></svg></button><button class="drop dim" aria-label="Back list"></button>
  <button class="ms-1" aria-label="Forward"><svg width="20" height="20"><use href="#fwc"/></svg></button><button class="drop dim" aria-label="Forward list"></button>
  <button class="ms-1" aria-label="Axes"><svg width="18" height="18"><use href="#axs"/></svg></button><button class="drop dim" aria-label="Axes list"></button>
  <div class="position-relative">
    <select class="form-select pick withicon" style="width:127px;height:20px" aria-label="View group"><option>Default</option></select>
    <svg class="position-absolute top-0 start-0 mt-1 ms-1" width="14" height="14"><use href="#wins"/></svg>
  </div>
  <span class="vsep ms-1"></span><svg width="24" height="22"><use href="#wins"/></svg><span class="vsep ms-1"></span>
  <div class="nums d-flex"><button class="lit">1</button><button class="lit">2</button><button class="lit">3</button><button class="lit">4</button><button>5</button><button>6</button><button>7</button><button>8</button></div>
  <span class="vsep"></span><span class="grip"></span>
  <label class="axis" for="cx">X</label><input id="cx" class="form-control fld coord" value="-98169.9726"><span class="vsep"></span>
  <label class="axis" for="cy">Y</label><input id="cy" class="form-control fld coord" value="30048.0161"><span class="vsep"></span>
  <label class="axis" for="cz">Z</label><input id="cz" class="form-control fld coord" value="463.1368"><span class="grip ms-1"></span>
  <button class="cell28 snapon" aria-label="Snap off"><svg width="26" height="26" viewBox="0 0 26 26"><path d="M14 10c3-8 9-5 5 0s0 6 5 4" stroke="#7a6a54" stroke-width="2" fill="none"/><path d="M5 9l12 13M17 9L5 22" stroke="#7d7414" stroke-width="5"/><path d="M5 9l12 13M17 9L5 22" stroke="#f6e916" stroke-width="3"/></svg></button><span class="vsep"></span>
  <button class="cell28" aria-label="Keypoint"><svg width="22" height="22" viewBox="0 0 24 24"><path d="M3 20l6-6 4 4 5-15" stroke="#555" fill="none" stroke-width="1.500"/><circle cx="10" cy="15" r="2.500" fill="#cde" stroke="#2b63d8"/></svg></button>
  <button class="cell28 snapon" aria-label="Midpoint"><svg width="26" height="26" viewBox="0 0 26 26"><path d="M1 1h24v24H1z" fill="#f5b54a"/><path d="M1 4h24M1 8h24M1 12h24M1 16h24M1 20h24M1 24h24" stroke="#333" stroke-dasharray="1 2" stroke-width="1.500"/><path d="M5 20h8l6-14" stroke="#444" fill="none"/><circle cx="5" cy="20" r="2.500" fill="#cde" stroke="#2b63d8"/><circle cx="14" cy="20" r="2.500" fill="#cde" stroke="#2b63d8"/><circle cx="19" cy="6" r="2.500" fill="#cde" stroke="#2b63d8"/></svg></button>
  <button class="cell28" aria-label="Nearest"><svg width="20" height="20" viewBox="0 0 24 24"><path d="M2 22L22 2" stroke="#555" stroke-width="1.500"/><circle cx="12" cy="12" r="3" fill="#cde" stroke="#2b63d8" stroke-width="1.500"/></svg></button>
  <button class="cell28" aria-label="Center"><svg width="20" height="20" viewBox="0 0 24 24"><circle cx="12" cy="12" r="9.500" fill="none" stroke="#555" stroke-width="1.500"/><circle cx="12" cy="12" r="2.500" fill="#cde" stroke="#2b63d8" stroke-width="1.500"/></svg></button>
  <button class="cell28" aria-label="Origin"><svg width="20" height="20" viewBox="0 0 24 24"><path d="M12 1v22M1 12h22M6 6l12 12M18 6L6 18" stroke="#555" stroke-width="1.500"/><circle cx="12" cy="12" r="3" fill="#cde" stroke="#2b63d8" stroke-width="1.500"/></svg></button>
  <button class="cell28" aria-label="Bisector"><svg width="20" height="20" viewBox="0 0 24 24"><path d="M2 22l9-9 7-4 2-7-4-1" stroke="#555" fill="none" stroke-width="1.500"/><circle cx="11" cy="13" r="3" fill="#cde" stroke="#2b63d8" stroke-width="1.500"/></svg></button>
  <button class="cell28" aria-label="Intersection"><svg width="20" height="20" viewBox="0 0 24 24"><path d="M2 3l20 18M21 2L3 22" stroke="#555" stroke-width="1.500"/><circle cx="12" cy="12" r="3" fill="#cde" stroke="#2b63d8" stroke-width="1.500"/></svg></button>
  <button class="cell28" aria-label="Tangent"><svg width="20" height="20" viewBox="0 0 24 24"><path d="M1 5h22M2 19C5 2 19 2 22 19" stroke="#555" fill="none" stroke-width="1.500"/></svg></button>
  <button class="cell28" aria-label="Perpendicular"><svg width="20" height="20" viewBox="0 0 24 24"><path d="M2 20h21M13 2v18" stroke="#555" stroke-width="1.500"/></svg></button>
  <button class="cell28" aria-label="Multi snap"><svg width="22" height="22" viewBox="0 0 24 24"><path d="M4 4h16v16H4z" fill="none" stroke="#444"/><g fill="#cde" stroke="#2b63d8" stroke-width="1.500"><circle cx="4" cy="4" r="2.500"/><circle cx="20" cy="4" r="2.500"/><circle cx="4" cy="20" r="2.500"/><circle cx="20" cy="20" r="2.500"/><circle cx="12" cy="12" r="2.500"/></g></svg></button><span class="vsep ms-1"></span>
  <span class="flex-grow-1 align-self-stretch" style="background:#f0f0f0"></span>
</div>

<div class="status d-flex align-items-center flex-shrink-0 zh">
  <span class="ps-1" style="width:466px">地质面形成 &gt; 接受/取消</span><span class="grip"></span>
  <svg width="28" height="22" viewBox="0 0 28 22"><path d="M1 22V1h24" stroke="#888" fill="none"/><path d="M20 5l3-3 3 3z"/></svg><span class="me-auto">打开文件</span>
  <span class="sbox"><svg width="18" height="18" viewBox="0 0 24 24"><path d="M2 18c10 4 16 2 16-12" fill="none" stroke="#3a78d8" stroke-width="3"/><path d="M18 2v6" stroke="#9bd" stroke-width="3"/></svg></span>
  <span class="sbox ps-1"><svg width="16" height="16" viewBox="0 0 16 16"><path d="M5 8V5a3 3 0 0 1 6 0v3" fill="none" stroke="#555" stroke-width="1.500"/><path d="M3 8h10v6H3z" fill="#b8a81c" stroke="#665c10"/></svg></span>
  <span class="sbox" style="width:116px">Default</span><span class="sbox" style="width:103px"></span>
  <span class="sbox text-nowrap" style="width:167px">-83964.0396, 50972.0827, -10931</span>
  <span class="sbox"></span><span class="sbox"></span>
  <span class="sbox"><svg width="18" height="18" viewBox="0 0 24 24"><path d="M4 4h16v17H4z" fill="none" stroke="#999" stroke-width="2"/><path d="M8 9h7v7" stroke="#999" fill="none" stroke-width="2"/></svg></span>
  <span class="sbox"><svg width="18" height="18"><use href="#rockd"/></svg></span><span class="sbox"></span>
  <span class="sbox me-0"><svg width="18" height="18" viewBox="0 0 24 24"><path d="M3 3h16v17H3zM7 3v17M12 3v17M16 14l6-10" fill="none" stroke="#aaa" stroke-width="2"/></svg></span>
</div>

<footer class="taskbar d-flex align-items-center flex-shrink-0">
  <button class="ms-2" aria-label="Start"><svg width="38" height="38" viewBox="0 0 38 38"><circle cx="19" cy="19" r="18" fill="url(#gOrb)"/><path d="M10 12c3-2 5-2 8-1l-1 7c-3-1-5-1-8 1z" fill="#f0642c"/><path d="M20 11c3 2 6 1 9 0l-2 7c-3 1-5 1-8 0z" fill="#8fc93c"/><path d="M9 20c3-1 5-2 8 0l-2 7c-2-1-5-1-8 0z" fill="#3f9be4"/><path d="M18 20c3 1 6 1 9 0l-2 7c-3 1-6 1-8 0z" fill="#fbcf3a"/></svg></button>
  <button class="ms-4 me-3" aria-label="Media player"><svg width="34" height="30" viewBox="0 0 32 30"><path d="M5 3h22v24H5z" fill="#9ed3f2"/><path d="M24 5h4v22h-4z" fill="#5aa6d6"/><circle cx="15" cy="15" r="10" fill="#f0701c"/><path d="M11 9l10 6-10 6z" fill="#fff"/></svg></button>
  <button class="tkb d-flex justify-content-center align-items-center" aria-label="Office"><svg width="30" height="28" viewBox="0 0 30 28"><path d="M2 5h10v10H2z" fill="#d43a3a"/><path d="M13 1h15v14H13z" fill="#f3b62c"/><path d="M13 17h15v9H13z" fill="#4d7fd8"/><path d="M2 17h10v8H2zM7 2v24M2 10h10" fill="none" stroke="#dde"/></svg></button>
  <button class="tkb cur d-flex justify-content-center align-items-center" aria-label="MicroStation"><svg width="32" height="32" viewBox="0 0 24 24"><path d="M6 2h5L9 13c0 3 4 2 5-2l2-9h4l-3 14 4 3-5 1-2-2c-2 2-5 2-6 0l-1 4H3z" fill="#1b86d8" stroke="#0b2c4c"/></svg></button>
  <button class="tkb d-flex justify-content-center align-items-center" aria-label="Notes"><svg width="30" height="30" viewBox="0 0 30 30"><path d="M3 5l21-3 4 21-20 5z" fill="#a9b95a"/><path d="M4 9c8 4 14-4 21 1M6 16c7 4 12-3 20 2" stroke="#dbe6a0" fill="none"/></svg></button>
  <button class="tkb d-flex justify-content-center align-items-center" aria-label="Recorder"><svg width="30" height="32" viewBox="0 0 30 32"><path d="M9 2h7v10l2 18h-8l-3-14z" fill="#111"/><path d="M12 4v24" stroke="#777"/><path d="M17 12h9v11h-9z" fill="#9ab53c"/></svg></button>
  <div class="tray d-flex align-items-center ms-auto align-self-stretch">
    <span class="me-1">CH</span>
    <svg viewBox="0 0 25 20"><path d="M4 7h17v9H4z" fill="#ddd"/><path d="M5 9.500h15M5 12.500h15" stroke="#666" stroke-dasharray="2 1"/></svg>
    <svg viewBox="0 0 25 20"><circle cx="12" cy="9" r="7.500" fill="#1422b4" stroke="#ccd"/><path d="M9 7c0-4 6-4 6-1 0 2-3 2-3 4.500M12 12v2" stroke="#fff" stroke-width="1.800" fill="none"/></svg>
    <svg viewBox="0 0 25 20"><path d="M6 1h6v5H6zM9 3h6v5H9z" fill="none" stroke="#fff"/><path d="M7 14h7l-3.500 4z" fill="#fff"/></svg>
    <svg viewBox="0 0 25 20"><path d="M3 14h8l-4-5z" fill="#fff"/></svg>
    <svg viewBox="0 0 25 20"><path d="M4 2v17" stroke="#fff" stroke-width="2"/><path d="M5 3h7v2h7v8h-7v-3H5z" fill="#fff"/></svg>
    <svg viewBox="0 0 25 20"><path d="M5 5h9v13H5z" fill="none" stroke="#fff" stroke-width="2"/><path d="M12 8h8v5h-3v5h-3v-5h-2z" fill="#fff"/></svg>
    <svg viewBox="0 0 25 20"><path d="M4 18v-3M8 18v-6M12 18V9M16 18V5M20 18V2" stroke="#fff" stroke-width="2.500"/></svg>
    <svg viewBox="0 0 25 20"><path d="M3 7h4l5-5v16l-5-5H3z" fill="#fff"/><path d="M15 6c2 2 2 6 0 8M18 4c3 3 3 9 0 12" stroke="#fff" fill="none"/></svg>
    <div class="clock"><div>7:24</div><div>2014/11/12</div></div>
    <button class="showdesk border-start align-self-stretch" aria-label="Show desktop"></button>
  </div>
</footer>

<section class="dlg zh" role="dialog" aria-label="地质面形成">
  <div class="cap d-flex align-items-center">
    <svg width="14" height="18"><use href="#rockd"/></svg><span>地质面形成</span>
    <div class="winbtns d-flex ms-auto align-self-start">
      <button aria-label="Minimize"><svg width="26" height="17" viewBox="0 0 26 17"><path d="M7 9h12v3H7z" fill="#fff" stroke="#567"/></svg></button>
      <button aria-label="Maximize"><svg width="26" height="17" viewBox="0 0 26 17"><path d="M8 4h10v8H8z" fill="#b9cde2" stroke="#90a5bc"/></svg></button>
      <button class="shut" aria-label="Close"><svg width="48" height="17" viewBox="0 0 48 17"><path d="M20 4l8 8m0-8l-8 8" stroke="#fff" stroke-width="3"/></svg></button>
    </div>
  </div>
  <div class="pane">
    <div class="frow">基本信息</div>
    <div class="frow"><label class="nm" for="f1">地质类型:</label><select id="f1" class="form-select pick"><option>地层</option></select></div>
    <div class="frow"><label class="nm" for="f2">地质界面:</label><select id="f2" class="form-select pick" style="width:115px"><option>全部</option></select></div>
    <div class="frow"><label class="nm" for="f3">创建方法:</label><select id="f3" class="form-select pick"><option>克里金</option></select></div>
    <div class="frow"><label class="nm" for="f4">克里金:</label><select id="f4" class="form-select pick"><option>球模型</option></select></div>
    <div class="frow"><span class="nm"></span><label class="ck"><input type="checkbox" class="form-check-input tick" checked>扩展到整个工程区</label></div>
    <div class="frow"><label class="nm" for="f5">扩展网格倍数:</label><select id="f5" class="form-select pick" style="width:30px"><option>1</option></select></div>
    <div class="frow"><span class="nm"></span><label class="ck"><input type="checkbox" class="form-check-input tick" checked>加密剖面结果</label></div>
    <div class="frow"><label class="nm" for="f6">网格间距X:</label><input id="f6" class="form-control fld" value="5.0000"><label class="nm" style="width:60px" for="f7">Y:</label><input id="f7" class="form-control fld" value="5.0000"></div>
    <div class="frow"><label class="nm" for="f8">光滑度:</label><input id="f8" class="form-control fld" value="20"><label class="nm" style="width:60px" for="f9">光滑半径:</label><input id="f9" class="form-control fld" value="1000.0000"></div>
    <div class="frow sect">参考面信息</div>
    <div class="frow"><label class="nm" for="f10">参考面:</label><select id="f10" class="form-select pick"><option>无</option></select></div>
    <div class="frow off"><label class="nm" for="f11">走向:</label><input id="f11" class="form-control fld" value="300.00" disabled></div>
    <div class="frow off"><label class="nm" for="f12">倾向:</label><select id="f12" class="form-select pick" disabled><option>NE</option></select></div>
    <div class="frow off"><label class="nm" for="f13">倾角:</label><input id="f13" class="form-control fld" value="70.00" disabled></div>
    <div class="rule d-flex align-items-center"><hr class="flex-grow-1 my-0 ms-1 border-dark"><button class="ps-1" aria-label="Collapse"><svg width="12" height="12" viewBox="0 0 12 12"><path d="M2 9l4-6 4 6z"/></svg></button></div>
    <div class="frow">数据来源</div>
    <div class="d-flex">
      <div class="srcs d-flex flex-column justify-content-between">
        <label><input type="checkbox" class="form-check-input tick" checked>钻孔</label>
        <label><input type="checkbox" class="form-check-input tick" checked>勘探线</label>
        <label><input type="checkbox" class="form-check-input tick">辅助剖面</label>
        <label><input type="checkbox" class="form-check-input tick hot">地质点</label>
        <label><input type="checkbox" class="form-check-input tick">平硐</label>
        <label><input type="checkbox" class="form-check-input tick">探坑</label>
        <label><input type="checkbox" class="form-check-input tick">探槽</label>
        <label><input type="checkbox" class="form-check-input tick">探井</label>
        <label><input type="checkbox" class="form-check-input tick">探针</label>
        <label><input type="checkbox" class="form-check-input tick">迹线</label>
      </div>
      <div class="d-flex flex-column ms-1 pt-1"><button class="flat-btn">全选</button><button class="flat-btn">全部不选</button></div>
    </div>
  </div>
  <svg class="position-absolute" style="left:115px;top:452px" width="14" height="22" viewBox="0 0 14 22"><path d="M1 1v16l4-4 3 7 3-1-3-7h5z" fill="#fff" stroke="#222"/></svg>
</section>
<script>
document.querySelectorAll('.part').forEach(c => c.indeterminate = true);
const y = document.getElementById('f7');
y.focus({preventScroll: true});
y.select();
</script>
</body>
</html>
